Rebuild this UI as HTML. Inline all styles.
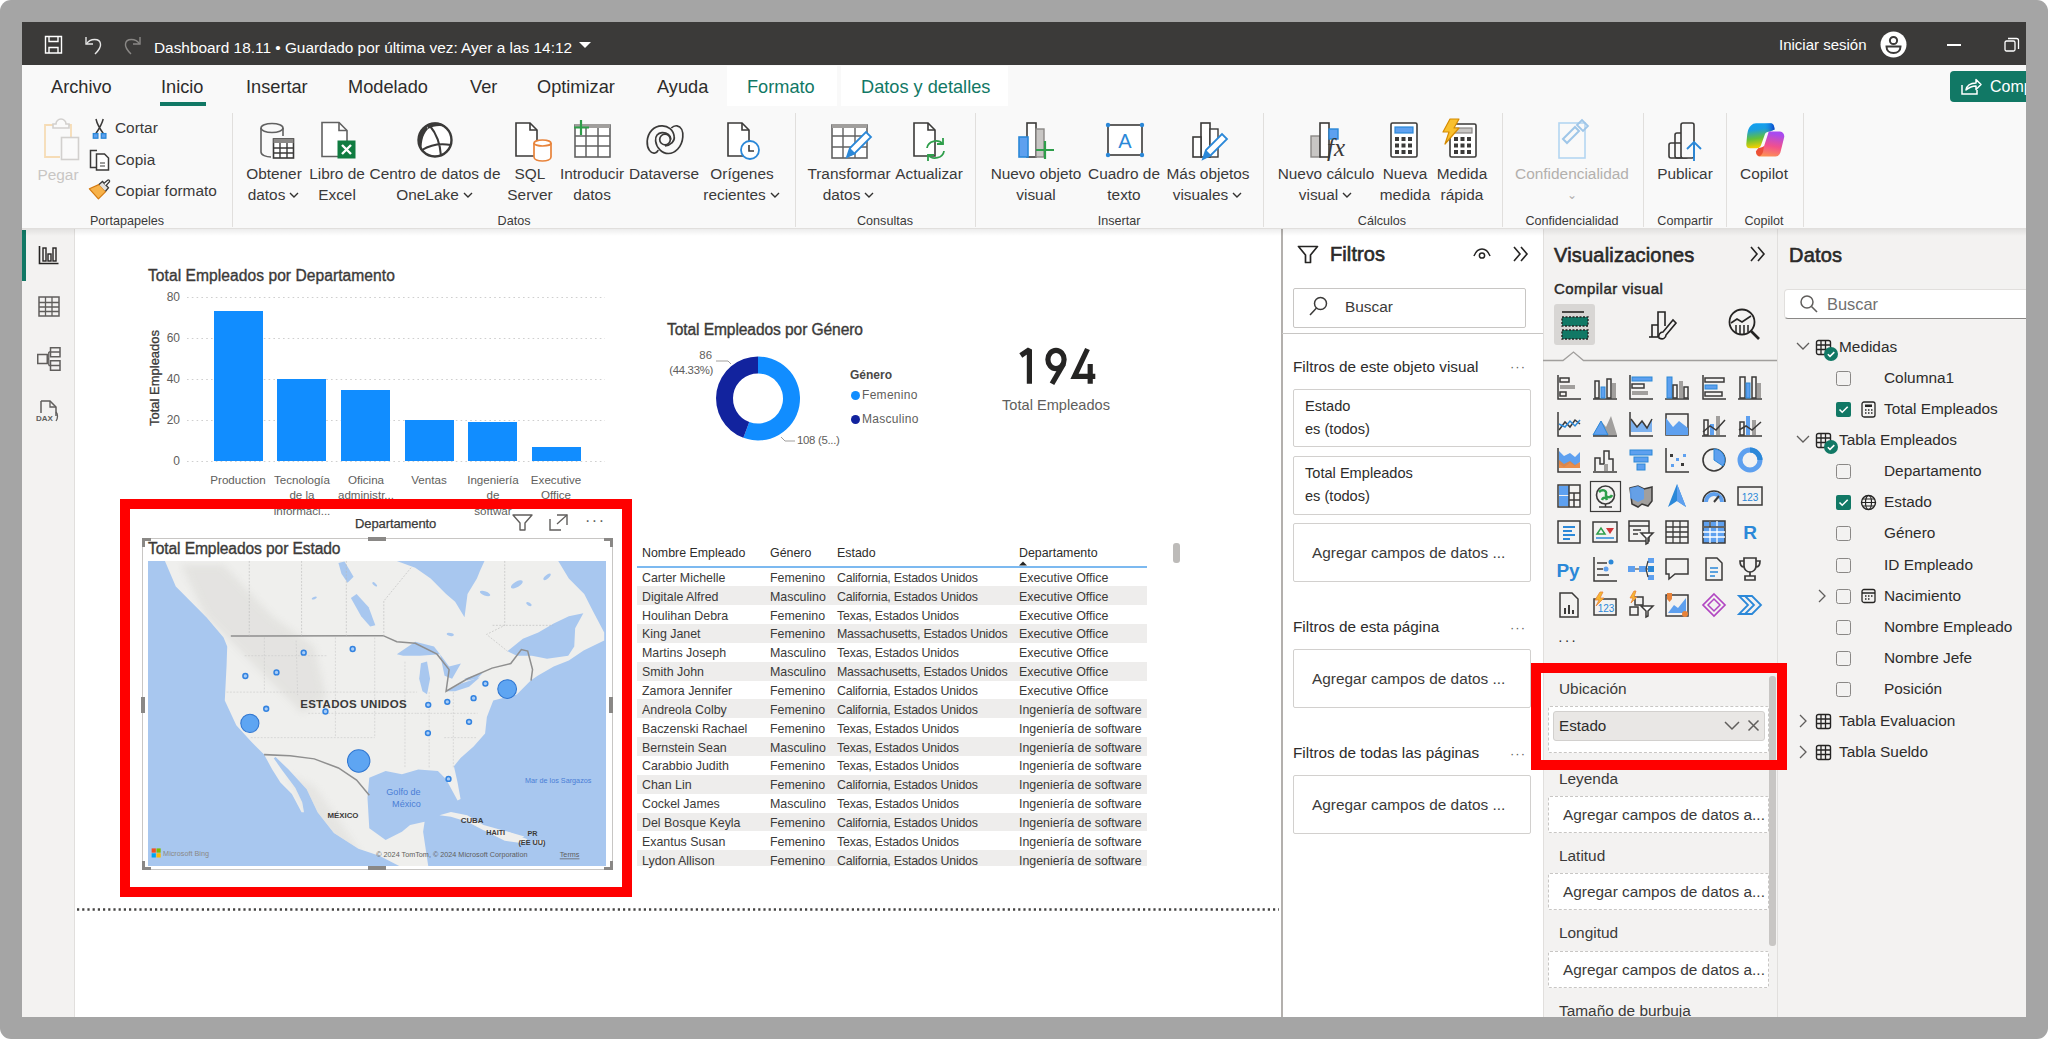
<!DOCTYPE html>
<html><head><meta charset="utf-8">
<style>
*{margin:0;padding:0;box-sizing:border-box}
html,body{width:2048px;height:1039px;overflow:hidden;background:#fff;font-family:"Liberation Sans",sans-serif;color:#252423}
.a{position:absolute}
.t{position:absolute;white-space:nowrap}
svg{overflow:visible}
#frame{position:absolute;left:0;top:0;width:2048px;height:1039px;background:#a5a5a5;border-radius:11px}
#clip{position:absolute;left:22px;top:22px;width:2004px;height:995px;overflow:hidden;background:#fff}
#in{position:absolute;left:-22px;top:-22px;width:2048px;height:1039px}
</style></head><body>
<div id="frame"></div>
<div id="clip"><div id="in">
<div class="a" style="left:0px;top:22px;width:2048px;height:43px;background:#3b3a39;"></div>
<svg class="a" style="left:44px;top:35px;" width="20" height="20" viewBox="0 0 20 20"><path d="M1.5 1.5h16v16.5h-16z M5 1.5v5h9v-5 M5 18v-5.5h9v5.5" fill="none" stroke="#fff" stroke-width="1.4"/></svg>
<svg class="a" style="left:84px;top:35px;" width="20" height="20" viewBox="0 0 20 20"><path d="M2 2v7h7" fill="none" stroke="#e6e6e6" stroke-width="1.4"/><path d="M2.5 9 C6 3, 16 3, 16.5 9 C17 12, 14 16, 11 19" fill="none" stroke="#e6e6e6" stroke-width="1.4"/></svg>
<svg class="a" style="left:122px;top:35px;" width="20" height="20" viewBox="0 0 20 20"><path d="M18 2v7h-7" fill="none" stroke="#8a8886" stroke-width="1.4"/><path d="M17.5 9 C14 3, 4 3, 3.5 9 C3 12, 6 16, 9 19" fill="none" stroke="#8a8886" stroke-width="1.4"/></svg>
<div class="t" style="left:154px;top:36.0px;font-size:15.4px;line-height:24px;color:#ffffff;">Dashboard 18.11 • Guardado por última vez: Ayer a las 14:12</div>
<svg class="a" style="left:579px;top:42px;" width="12" height="7" viewBox="0 0 12 7"><path d="M0 0h12l-6 6z" fill="#fff"/></svg>
<div class="t" style="left:1779px;top:33.0px;font-size:15px;line-height:24px;color:#ffffff;">Iniciar sesión</div>
<svg class="a" style="left:1880px;top:31px;" width="27" height="27" viewBox="0 0 27 27"><circle cx="13.5" cy="13.5" r="13" fill="#fff"/><circle cx="13.5" cy="9.5" r="3.6" fill="none" stroke="#3b3a39" stroke-width="2"/><path d="M6.5 15.5h14c0 4-3 6.5-7 6.5s-7-2.5-7-6.5z" fill="none" stroke="#3b3a39" stroke-width="2"/></svg>
<div class="a" style="left:1947px;top:44px;width:14px;height:1.5px;background:#fff;"></div>
<svg class="a" style="left:2004px;top:37px;" width="16" height="16" viewBox="0 0 16 16"><rect x="1" y="4" width="10" height="10" rx="1.5" fill="none" stroke="#fff" stroke-width="1.3"/><path d="M4 1.5h8.5a2 2 0 0 1 2 2v8.5" fill="none" stroke="#fff" stroke-width="1.3"/></svg>
<div class="a" style="left:0px;top:65px;width:2048px;height:164px;background:#f9f9f9;"></div>
<div class="a" style="left:727px;top:66px;width:110px;height:40px;background:#ffffff;"></div>
<div class="a" style="left:841px;top:66px;width:167px;height:40px;background:#ffffff;"></div>
<div class="t" style="left:51px;top:75.0px;font-size:18.2px;line-height:24px;color:#2d2c2b;">Archivo</div>
<div class="t" style="left:161px;top:75.0px;font-size:18.2px;line-height:24px;color:#2d2c2b;">Inicio</div>
<div class="t" style="left:246px;top:75.0px;font-size:18.2px;line-height:24px;color:#2d2c2b;">Insertar</div>
<div class="t" style="left:348px;top:75.0px;font-size:18.2px;line-height:24px;color:#2d2c2b;">Modelado</div>
<div class="t" style="left:470px;top:75.0px;font-size:18.2px;line-height:24px;color:#2d2c2b;">Ver</div>
<div class="t" style="left:537px;top:75.0px;font-size:18.2px;line-height:24px;color:#2d2c2b;">Optimizar</div>
<div class="t" style="left:657px;top:75.0px;font-size:18.2px;line-height:24px;color:#2d2c2b;">Ayuda</div>
<div class="t" style="left:747px;top:75.0px;font-size:18.2px;line-height:24px;color:#117865;">Formato</div>
<div class="t" style="left:861px;top:75.0px;font-size:18.2px;line-height:24px;color:#117865;">Datos y detalles</div>
<div class="a" style="left:160px;top:102px;width:46px;height:4px;background:#117865;"></div>
<div class="a" style="left:1950px;top:71px;width:90px;height:31px;background:#117865;border-radius:4px"></div>
<svg class="a" style="left:1960px;top:77px;" width="22" height="19" viewBox="0 0 22 19"><path d="M2 8v9h15v-4" fill="none" stroke="#fff" stroke-width="1.5"/><path d="M6 13c1-5 5-7 10-7V2.5l5 5-5 5V9c-4 0-7 1.5-10 4z" fill="none" stroke="#fff" stroke-width="1.5" stroke-linejoin="round"/></svg>
<div class="t" style="left:1990px;top:75.0px;font-size:16px;line-height:24px;color:#ffffff;">Comp</div>
<div class="a" style="left:22px;top:228px;width:2004px;height:1px;background:#e1dfdd;"></div>
<div class="a" style="left:232px;top:113px;width:1px;height:114px;background:#e1dfdd;"></div>
<div class="a" style="left:795px;top:113px;width:1px;height:114px;background:#e1dfdd;"></div>
<div class="a" style="left:975px;top:113px;width:1px;height:114px;background:#e1dfdd;"></div>
<div class="a" style="left:1263px;top:113px;width:1px;height:114px;background:#e1dfdd;"></div>
<div class="a" style="left:1502px;top:113px;width:1px;height:114px;background:#e1dfdd;"></div>
<div class="a" style="left:1643px;top:113px;width:1px;height:114px;background:#e1dfdd;"></div>
<div class="a" style="left:1726px;top:113px;width:1px;height:114px;background:#e1dfdd;"></div>
<div class="a" style="left:1803px;top:113px;width:1px;height:114px;background:#e1dfdd;"></div>
<div class="t" style="left:-173px;width:600px;text-align:center;top:209.0px;font-size:12.6px;line-height:24px;color:#3b3a39;">Portapapeles</div>
<div class="t" style="left:214px;width:600px;text-align:center;top:209.0px;font-size:12.6px;line-height:24px;color:#3b3a39;">Datos</div>
<div class="t" style="left:585px;width:600px;text-align:center;top:209.0px;font-size:12.6px;line-height:24px;color:#3b3a39;">Consultas</div>
<div class="t" style="left:819px;width:600px;text-align:center;top:209.0px;font-size:12.6px;line-height:24px;color:#3b3a39;">Insertar</div>
<div class="t" style="left:1082px;width:600px;text-align:center;top:209.0px;font-size:12.6px;line-height:24px;color:#3b3a39;">Cálculos</div>
<div class="t" style="left:1272px;width:600px;text-align:center;top:209.0px;font-size:12.6px;line-height:24px;color:#3b3a39;">Confidencialidad</div>
<div class="t" style="left:1385px;width:600px;text-align:center;top:209.0px;font-size:12.6px;line-height:24px;color:#3b3a39;">Compartir</div>
<div class="t" style="left:1464px;width:600px;text-align:center;top:209.0px;font-size:12.6px;line-height:24px;color:#3b3a39;">Copilot</div>
<svg class="a" style="left:40px;top:119px;" width="42" height="44" viewBox="0 0 42 44"><path d="M13 6H5v32h15" fill="none" stroke="#f6dcb6" stroke-width="1.8"/><path d="M27 6h4v18" fill="none" stroke="#f6dcb6" stroke-width="1.8"/><path d="M13 9V5h3a5 5 0 0 1 10 0h3v4z" fill="#fafafa" stroke="#d2d0ce" stroke-width="1.6"/><rect x="21.5" y="18.5" width="17" height="22" fill="#fafafa" stroke="#d2d0ce" stroke-width="1.6"/></svg>
<div class="t" style="left:-242px;width:600px;text-align:center;top:163.0px;font-size:15.4px;line-height:24px;color:#c8c6c4;">Pegar</div>
<svg class="a" style="left:91px;top:119px;" width="18" height="20" viewBox="0 0 18 20"><path d="M5 0C6 5 9 10 12.6 15M12.2 0C11 5 8 10 4.6 15" stroke="#3b3a39" stroke-width="1.5" fill="none"/><rect x="2.3" y="14.6" width="4.6" height="4.6" fill="#5ea0ef" stroke="#2b88d8" stroke-width="1.3"/><rect x="10.3" y="14.6" width="4.6" height="4.6" fill="#5ea0ef" stroke="#2b88d8" stroke-width="1.3"/></svg>
<div class="t" style="left:115px;top:116.0px;font-size:15.4px;line-height:24px;color:#3b3a39;">Cortar</div>
<svg class="a" style="left:89px;top:149px;" width="22" height="22" viewBox="0 0 22 22"><path d="M8 1.5H1.5v17H7" fill="none" stroke="#3b3a39" stroke-width="1.5"/><path d="M7.5 5h8l4 4v12h-12z" fill="#fff" stroke="#3b3a39" stroke-width="1.5"/><path d="M11 14h5M11 17h5" stroke="#3b3a39" stroke-width="1.2"/></svg>
<div class="t" style="left:115px;top:148.0px;font-size:15.4px;line-height:24px;color:#3b3a39;">Copia</div>
<svg class="a" style="left:88px;top:179px;" width="23" height="22" viewBox="0 0 23 22"><path d="M1.4 9.8L11.3 5.4L17.7 12.6L10.4 19.9Z" fill="#f7b24a" stroke="#d47a10" stroke-width="1.2" stroke-linejoin="round"/><path d="M11 5.6L14.5 2.5L20.5 8.8L17.5 12.2" fill="#e1dfdd" stroke="#3b3a39" stroke-width="1.3"/><path d="M15.8 4.6L19.6 1.2C20.6 0.4 22.2 1.8 21.4 2.8L18 6.6" fill="#fff" stroke="#3b3a39" stroke-width="1.3"/></svg>
<div class="t" style="left:115px;top:179.0px;font-size:15.4px;line-height:24px;color:#3b3a39;">Copiar formato</div>
<svg class="a" style="left:258.0px;top:121px;" width="40" height="40" viewBox="0 0 40 40"><path d="M3 7v24c0 3 5 5 10 5" fill="none" stroke="#616161" stroke-width="1.6"/><path d="M25 7v8" fill="none" stroke="#616161" stroke-width="1.6"/><ellipse cx="14" cy="7" rx="11" ry="4.5" fill="none" stroke="#616161" stroke-width="1.6"/><rect x="15.5" y="18" width="20" height="19" fill="#fff" stroke="#3b3a39" stroke-width="1.6"/><rect x="15.5" y="18" width="20" height="4" fill="#8a8886"/><path d="M15.5 27h20M15.5 32h20M22 22v15M29 22v15" stroke="#3b3a39" stroke-width="1.4"/></svg>
<div class="t" style="left:-26px;width:600px;text-align:center;top:162.0px;font-size:15.4px;line-height:24px;color:#3b3a39;">Obtener</div>
<div class="t" style="left:-26px;width:600px;text-align:center;top:183.0px;font-size:15.4px;line-height:24px;color:#3b3a39;">datos<svg width="12" height="8" style="margin-left:3px;vertical-align:middle;position:relative;top:-1px" viewBox="0 0 12 8"><path d="M2 2l4 4 4-4" fill="none" stroke="#323130" stroke-width="1.4"/></svg></div>
<svg class="a" style="left:318.0px;top:121px;" width="40" height="40" viewBox="0 0 40 40"><path d="M4 1.5h17l8 8v26H4z" fill="#fff" stroke="#616161" stroke-width="1.6"/><path d="M21 1.5v8h8" fill="none" stroke="#616161" stroke-width="1.6"/><rect x="19.5" y="19.5" width="18" height="18" fill="#107c41"/><path d="M24 24l9 9M33 24l-9 9" stroke="#fff" stroke-width="2.4"/></svg>
<div class="t" style="left:37px;width:600px;text-align:center;top:162.0px;font-size:15.4px;line-height:24px;color:#3b3a39;">Libro de</div>
<div class="t" style="left:37px;width:600px;text-align:center;top:183.0px;font-size:15.4px;line-height:24px;color:#3b3a39;">Excel</div>
<svg class="a" style="left:415.0px;top:120px;" width="40" height="40" viewBox="0 0 40 40"><circle cx="20" cy="20" r="16.5" fill="#fff" stroke="#3b3a39" stroke-width="2.4"/><path d="M11 6C3 11 1 24 7 32C6 25 7 15 13 9Z" fill="#3b3a39"/><path d="M12 5C18 1 26 2 31 7C25 5 18 6 13 9Z" fill="#3b3a39"/><path d="M15 6C21 13 25 22 26 36M7 30C15 25 25 23 36 25" fill="none" stroke="#3b3a39" stroke-width="2"/></svg>
<div class="t" style="left:135px;width:600px;text-align:center;top:162.0px;font-size:15.4px;line-height:24px;color:#3b3a39;">Centro de datos de</div>
<div class="t" style="left:135px;width:600px;text-align:center;top:183.0px;font-size:15.4px;line-height:24px;color:#3b3a39;">OneLake<svg width="12" height="8" style="margin-left:3px;vertical-align:middle;position:relative;top:-1px" viewBox="0 0 12 8"><path d="M2 2l4 4 4-4" fill="none" stroke="#323130" stroke-width="1.4"/></svg></div>
<svg class="a" style="left:511.0px;top:121px;" width="40" height="40" viewBox="0 0 40 40"><path d="M5 2h14l7 7v26H5z" fill="#fff" stroke="#3b3a39" stroke-width="1.6"/><path d="M19 2v7h7" fill="none" stroke="#3b3a39" stroke-width="1.6"/><path d="M23 22v14c0 2.5 4 4 8.5 4s8.5-1.5 8.5-4V22" fill="#fff" stroke="#e8833a" stroke-width="1.7"/><ellipse cx="31.5" cy="22" rx="8.5" ry="3" fill="#fff" stroke="#e8833a" stroke-width="1.7"/></svg>
<div class="t" style="left:230px;width:600px;text-align:center;top:162.0px;font-size:15.4px;line-height:24px;color:#3b3a39;">SQL</div>
<div class="t" style="left:230px;width:600px;text-align:center;top:183.0px;font-size:15.4px;line-height:24px;color:#3b3a39;">Server</div>
<svg class="a" style="left:572.0px;top:120px;" width="40" height="40" viewBox="0 0 40 40"><rect x="3" y="5" width="35" height="32" fill="#fff" stroke="#616161" stroke-width="1.6"/><rect x="3" y="4" width="35" height="4" fill="#a19f9d"/><path d="M3 16h35M3 26h35M14 8v29M26 8v29" stroke="#616161" stroke-width="1.5"/><path d="M9 0v15M2 7.5h15" stroke="#2e9e4a" stroke-width="2.2"/></svg>
<div class="t" style="left:292px;width:600px;text-align:center;top:162.0px;font-size:15.4px;line-height:24px;color:#3b3a39;">Introducir</div>
<div class="t" style="left:292px;width:600px;text-align:center;top:183.0px;font-size:15.4px;line-height:24px;color:#3b3a39;">datos</div>
<svg class="a" style="left:644px;top:119px;" width="40" height="40" viewBox="0 0 40 40"><path d="M21 26.8C27 26 31 22 30.2 17.7C29.5 11 24 6.5 17.7 6.8C10 7 4 13 3.2 22C2.8 30 7 35 11 34C12.5 33.6 13.6 32.5 14.3 31.1" fill="none" stroke="#3b3a39" stroke-width="1.7"/><path d="M27.3 9C29 7.3 31 6.5 33 6.8C37 7.5 39.3 12 38.8 18C38 28 31 34.5 24.4 34.5C18 34.5 12.5 29 11.6 22C11 17 14 14 18 13.6C23 13.3 27 16.5 27 20.5" fill="none" stroke="#3b3a39" stroke-width="1.7"/><circle cx="21" cy="20.5" r="5.3" fill="none" stroke="#3b3a39" stroke-width="1.7"/></svg>
<div class="t" style="left:364px;width:600px;text-align:center;top:162.0px;font-size:15.4px;line-height:24px;color:#3b3a39;">Dataverse</div>
<svg class="a" style="left:724.0px;top:121px;" width="40" height="40" viewBox="0 0 40 40"><path d="M4 2h14l7 7v26H4z" fill="#fff" stroke="#3b3a39" stroke-width="1.6"/><path d="M18 2v7h7" fill="none" stroke="#3b3a39" stroke-width="1.6"/><circle cx="26" cy="29" r="9" fill="#fff" stroke="#2b88d8" stroke-width="1.8"/><path d="M25 24v6h5" fill="none" stroke="#3b3a39" stroke-width="1.6"/></svg>
<div class="t" style="left:442px;width:600px;text-align:center;top:162.0px;font-size:15.4px;line-height:24px;color:#3b3a39;">Orígenes</div>
<div class="t" style="left:442px;width:600px;text-align:center;top:183.0px;font-size:15.4px;line-height:24px;color:#3b3a39;">recientes<svg width="12" height="8" style="margin-left:3px;vertical-align:middle;position:relative;top:-1px" viewBox="0 0 12 8"><path d="M2 2l4 4 4-4" fill="none" stroke="#323130" stroke-width="1.4"/></svg></div>
<svg class="a" style="left:829.0px;top:121px;" width="40" height="40" viewBox="0 0 40 40"><rect x="3" y="4" width="35" height="33" fill="#fff" stroke="#616161" stroke-width="1.6"/><rect x="3" y="3" width="35" height="4" fill="#a19f9d"/><path d="M3 15h35M3 26h35M14 7v30M26 7v30" stroke="#616161" stroke-width="1.4"/><path d="M18 36l3-9 16-16 5 5-16 16z" fill="#fff" stroke="#2b88d8" stroke-width="1.8"/><path d="M18 36l3-9 6 6z" fill="#2b88d8"/></svg>
<div class="t" style="left:549px;width:600px;text-align:center;top:162.0px;font-size:15.4px;line-height:24px;color:#3b3a39;">Transformar</div>
<div class="t" style="left:549px;width:600px;text-align:center;top:183.0px;font-size:15.4px;line-height:24px;color:#3b3a39;">datos<svg width="12" height="8" style="margin-left:3px;vertical-align:middle;position:relative;top:-1px" viewBox="0 0 12 8"><path d="M2 2l4 4 4-4" fill="none" stroke="#323130" stroke-width="1.4"/></svg></div>
<svg class="a" style="left:910.0px;top:121px;" width="40" height="40" viewBox="0 0 40 40"><path d="M4 2h14l7 7v26H4z" fill="#fff" stroke="#3b3a39" stroke-width="1.6"/><path d="M18 2v7h7" fill="none" stroke="#3b3a39" stroke-width="1.6"/><path d="M17 27a9 8 0 0 1 16-4M34 30a9 8 0 0 1-16 4" fill="none" stroke="#2e9e4a" stroke-width="1.8"/><path d="M33 17v6h-6M18 40v-6h6" fill="none" stroke="#2e9e4a" stroke-width="1.8"/></svg>
<div class="t" style="left:629px;width:600px;text-align:center;top:162.0px;font-size:15.4px;line-height:24px;color:#3b3a39;">Actualizar</div>
<svg class="a" style="left:1017.0px;top:120px;" width="40" height="40" viewBox="0 0 40 40"><rect x="10" y="3" width="9" height="34" fill="#fff" stroke="#3b3a39" stroke-width="1.6"/><rect x="2" y="17" width="9" height="20" fill="#5ea0ef" stroke="#2b88d8" stroke-width="1.6"/><rect x="19" y="9" width="8" height="28" fill="#c8c6c4" stroke="#8a8886" stroke-width="1.4"/><path d="M28 21v18M19 30h18" stroke="#2e9e4a" stroke-width="2.2"/></svg>
<div class="t" style="left:736px;width:600px;text-align:center;top:162.0px;font-size:15.4px;line-height:24px;color:#3b3a39;">Nuevo objeto</div>
<div class="t" style="left:736px;width:600px;text-align:center;top:183.0px;font-size:15.4px;line-height:24px;color:#3b3a39;">visual</div>
<svg class="a" style="left:1105.0px;top:121px;" width="40" height="40" viewBox="0 0 40 40"><rect x="3" y="4" width="34" height="30" fill="#fff" stroke="#3b3a39" stroke-width="1.6"/><circle cx="3" cy="4" r="2.2" fill="#2b88d8"/><circle cx="37" cy="4" r="2.2" fill="#2b88d8"/><circle cx="3" cy="34" r="2.2" fill="#2b88d8"/><circle cx="37" cy="34" r="2.2" fill="#2b88d8"/><text x="20" y="27" font-size="20" text-anchor="middle" fill="#2b88d8" font-family="Liberation Sans">A</text></svg>
<div class="t" style="left:824px;width:600px;text-align:center;top:162.0px;font-size:15.4px;line-height:24px;color:#3b3a39;">Cuadro de</div>
<div class="t" style="left:824px;width:600px;text-align:center;top:183.0px;font-size:15.4px;line-height:24px;color:#3b3a39;">texto</div>
<svg class="a" style="left:1189.0px;top:120px;" width="40" height="40" viewBox="0 0 40 40"><rect x="12" y="3" width="9" height="34" fill="#fff" stroke="#3b3a39" stroke-width="1.6"/><rect x="4" y="17" width="8" height="20" fill="#fff" stroke="#3b3a39" stroke-width="1.6"/><rect x="21" y="9" width="8" height="28" fill="#fff" stroke="#3b3a39" stroke-width="1.4"/><path d="M14 39l3-9 16-16 5 5-16 16z" fill="#fff" stroke="#2b88d8" stroke-width="1.8"/><path d="M14 39l3-9 6 6z" fill="#2b88d8"/></svg>
<div class="t" style="left:908px;width:600px;text-align:center;top:162.0px;font-size:15.4px;line-height:24px;color:#3b3a39;">Más objetos</div>
<div class="t" style="left:908px;width:600px;text-align:center;top:183.0px;font-size:15.4px;line-height:24px;color:#3b3a39;">visuales<svg width="12" height="8" style="margin-left:3px;vertical-align:middle;position:relative;top:-1px" viewBox="0 0 12 8"><path d="M2 2l4 4 4-4" fill="none" stroke="#323130" stroke-width="1.4"/></svg></div>
<svg class="a" style="left:1307.0px;top:120px;" width="40" height="40" viewBox="0 0 40 40"><rect x="4" y="16" width="9" height="21" fill="#c8c6c4" stroke="#8a8886" stroke-width="1.4"/><rect x="13" y="3" width="9" height="34" fill="#fff" stroke="#3b3a39" stroke-width="1.6"/><rect x="22" y="9" width="9" height="10" fill="#5ea0ef" stroke="#2b88d8" stroke-width="1.4"/><text x="29" y="36" font-size="25" font-style="italic" text-anchor="middle" fill="#3b3a39" font-family="Liberation Serif">fx</text></svg>
<div class="t" style="left:1026px;width:600px;text-align:center;top:162.0px;font-size:15.4px;line-height:24px;color:#3b3a39;">Nuevo cálculo</div>
<div class="t" style="left:1026px;width:600px;text-align:center;top:183.0px;font-size:15.4px;line-height:24px;color:#3b3a39;">visual<svg width="12" height="8" style="margin-left:3px;vertical-align:middle;position:relative;top:-1px" viewBox="0 0 12 8"><path d="M2 2l4 4 4-4" fill="none" stroke="#323130" stroke-width="1.4"/></svg></div>
<svg class="a" style="left:1385.0px;top:120px;" width="40" height="40" viewBox="0 0 40 40"><rect x="6" y="3" width="26" height="34" rx="1.5" fill="#fff" stroke="#3b3a39" stroke-width="1.6"/><rect x="10" y="7" width="18" height="6" fill="#5ea0ef" stroke="#2b88d8" stroke-width="1.2"/><rect x="10.0" y="17.0" width="4" height="4" fill="#3b3a39"/><rect x="16.5" y="17.0" width="4" height="4" fill="#3b3a39"/><rect x="23.0" y="17.0" width="4" height="4" fill="#3b3a39"/><rect x="10.0" y="23.5" width="4" height="4" fill="#3b3a39"/><rect x="16.5" y="23.5" width="4" height="4" fill="#3b3a39"/><rect x="23.0" y="23.5" width="4" height="4" fill="#3b3a39"/><rect x="10.0" y="30.0" width="4" height="4" fill="#3b3a39"/><rect x="16.5" y="30.0" width="4" height="4" fill="#3b3a39"/><rect x="23.0" y="30.0" width="4" height="4" fill="#3b3a39"/></svg>
<div class="t" style="left:1105px;width:600px;text-align:center;top:162.0px;font-size:15.4px;line-height:24px;color:#3b3a39;">Nueva</div>
<div class="t" style="left:1105px;width:600px;text-align:center;top:183.0px;font-size:15.4px;line-height:24px;color:#3b3a39;">medida</div>
<svg class="a" style="left:1440.0px;top:119px;" width="40" height="40" viewBox="0 0 40 40"><rect x="10" y="5" width="26" height="33" rx="1.5" fill="#fff" stroke="#3b3a39" stroke-width="1.6"/><rect x="14" y="9" width="18" height="5" fill="#c8c6c4" stroke="#8a8886" stroke-width="1.2"/><rect x="14.0" y="18.0" width="4" height="4" fill="#3b3a39"/><rect x="20.5" y="18.0" width="4" height="4" fill="#3b3a39"/><rect x="27.0" y="18.0" width="4" height="4" fill="#3b3a39"/><rect x="14.0" y="24.5" width="4" height="4" fill="#3b3a39"/><rect x="20.5" y="24.5" width="4" height="4" fill="#3b3a39"/><rect x="27.0" y="24.5" width="4" height="4" fill="#3b3a39"/><rect x="14.0" y="31.0" width="4" height="4" fill="#3b3a39"/><rect x="20.5" y="31.0" width="4" height="4" fill="#3b3a39"/><rect x="27.0" y="31.0" width="4" height="4" fill="#3b3a39"/><path d="M10 0H19L14 9H19L5 25L9 13H3Z" fill="#f9c02e" stroke="#d68b00" stroke-width="1.2" stroke-linejoin="round"/></svg>
<div class="t" style="left:1162px;width:600px;text-align:center;top:162.0px;font-size:15.4px;line-height:24px;color:#3b3a39;">Medida</div>
<div class="t" style="left:1162px;width:600px;text-align:center;top:183.0px;font-size:15.4px;line-height:24px;color:#3b3a39;">rápida</div>
<svg class="a" style="left:1555.0px;top:119px;" width="40" height="40" viewBox="0 0 40 40"><rect x="4" y="4" width="26" height="35" fill="none" stroke="#b4d6f2" stroke-width="1.6"/><path d="M8 20l12-12 4 4-12 12z" fill="none" stroke="#9fc6e8" stroke-width="2"/><path d="M22 6l5-5 6 6-5 5z" fill="none" stroke="#9fc6e8" stroke-width="1.8"/></svg>
<div class="t" style="left:1272px;width:600px;text-align:center;top:162.0px;font-size:15.4px;line-height:24px;color:#b3b0ad;">Confidencialidad</div>
<div class="t" style="left:1272px;width:600px;text-align:center;top:183.0px;font-size:12px;line-height:24px;color:#b3b0ad;">&#8964;</div>
<svg class="a" style="left:1667.0px;top:121px;" width="40" height="40" viewBox="0 0 40 40"><rect x="2" y="22" width="13" height="15" rx="2" fill="none" stroke="#3b3a39" stroke-width="1.6"/><rect x="8" y="12" width="13" height="25" rx="2" fill="none" stroke="#3b3a39" stroke-width="1.6"/><rect x="14" y="2" width="13" height="35" rx="2" fill="#f9f9f9" stroke="#3b3a39" stroke-width="1.6"/><path d="M27 40V21M20 28l7-7 7 7" fill="none" stroke="#2b88d8" stroke-width="1.9"/></svg>
<div class="t" style="left:1385px;width:600px;text-align:center;top:162.0px;font-size:15.4px;line-height:24px;color:#3b3a39;">Publicar</div>
<svg class="a" style="left:1744px;top:121px;" width="42" height="38" viewBox="0 0 42 38"><defs><linearGradient id="cpa" x1="0" y1="0" x2="0.15" y2="1"><stop offset="0" stop-color="#10a0f5"/><stop offset=".3" stop-color="#1b9ee0"/><stop offset=".65" stop-color="#63c13a"/><stop offset="1" stop-color="#f2cf00"/></linearGradient><linearGradient id="cpb" x1="0.2" y1="0" x2="0" y2="1"><stop offset="0" stop-color="#a84af0"/><stop offset=".5" stop-color="#f2508c"/><stop offset="1" stop-color="#ff9b4a"/></linearGradient><linearGradient id="cpc" x1="0" y1="0" x2="1" y2="0"><stop offset="0" stop-color="#1b8ff0" stop-opacity="0"/><stop offset="1" stop-color="#0b3fc8"/></linearGradient></defs><path d="M7 4.6Q9 2.2 12 2.2H27Q30 2.2 30.6 8.4L26 10.4Q22 10.4 21 13L16.7 25Q15.5 27.2 13 27.2H6Q2 27.2 2.3 23L3.2 13.5Q4 7 7 4.6Z" fill="url(#cpa)"/><path d="M20 2.2H27Q30 2.2 30.6 8.4L26 10.4Q23 10.4 21.5 11.5L20 2.2Z" fill="url(#cpc)"/><path d="M25 10.4H36Q40.3 11 40.3 15.7L36.4 31.5Q35 35.4 31.6 35.4H16Q12.5 35.4 11.9 30.6L14.3 27.2Q18 27 20 25.3L24 13Q24.5 10.4 25 10.4Z" fill="url(#cpb)"/><path d="M11.9 30.6L14.3 27.2Q18 27 20 25.3L19 31Q17 35.4 15 35.4Q12.5 35 11.9 30.6Z" fill="#e8452c" opacity=".8"/></svg>
<div class="t" style="left:1464px;width:600px;text-align:center;top:162.0px;font-size:15.4px;line-height:24px;color:#3b3a39;">Copilot</div>
<div class="a" style="left:22px;top:229px;width:53px;height:788px;background:#f3f2f1;border-right:1px solid #e1dfdd"></div>
<div class="a" style="left:22px;top:230px;width:4px;height:51px;background:#117865;"></div>
<svg class="a" style="left:38px;top:245px;" width="22" height="20" viewBox="0 0 22 20"><path d="M1.5 1v17.5h19" fill="none" stroke="#252423" stroke-width="1.6"/><rect x="5" y="3" width="3" height="13" fill="none" stroke="#252423" stroke-width="1.4"/><rect x="10" y="9" width="3" height="7" fill="none" stroke="#252423" stroke-width="1.4"/><rect x="15" y="3" width="3" height="13" fill="none" stroke="#252423" stroke-width="1.4"/></svg>
<svg class="a" style="left:38px;top:296px;" width="22" height="21" viewBox="0 0 22 21"><rect x="1" y="1" width="20" height="19" fill="none" stroke="#605e5c" stroke-width="1.5"/><path d="M1 6.5h20M1 11h20M1 15.5h20M7.5 1v19M14 1v19" stroke="#605e5c" stroke-width="1.3"/></svg>
<svg class="a" style="left:37px;top:347px;" width="24" height="24" viewBox="0 0 24 24"><rect x="0.75" y="7.5" width="9.5" height="9" fill="none" stroke="#605e5c" stroke-width="1.5"/><rect x="13.5" y="0.75" width="9.5" height="9" fill="none" stroke="#605e5c" stroke-width="1.5"/><rect x="13.5" y="13.75" width="9.5" height="9.5" fill="none" stroke="#605e5c" stroke-width="1.5"/><path d="M10 12h1.75M11.75 5v13.5M11.75 5h1.75M11.75 18.5h1.75M13.5 5h9.5M13.5 18.5h9.5" fill="none" stroke="#605e5c" stroke-width="1.3"/></svg>
<svg class="a" style="left:35px;top:400px;" width="26" height="24" viewBox="0 0 26 24"><path d="M6 1h9l6 6v9" fill="none" stroke="#605e5c" stroke-width="1.5"/><path d="M6 1v12" stroke="#605e5c" stroke-width="1.5"/><path d="M15 1v6h6" fill="none" stroke="#605e5c" stroke-width="1.3"/><path d="M21 12c2 2 2 6 0 9" fill="none" stroke="#605e5c" stroke-width="1.3"/><text x="1" y="21" font-size="8" font-family="Liberation Sans" font-weight="700" fill="#605e5c">DAX</text></svg>
<div class="a" style="left:1281px;top:229px;width:262px;height:788px;background:#ffffff;border-left:2px solid #b3b0ad"></div>
<svg class="a" style="left:1297px;top:245px;" width="22" height="19" viewBox="0 0 22 19"><path d="M1.5 1.5h19l-7 8.5v7.5h-5v-7.5z" fill="none" stroke="#252423" stroke-width="1.7" stroke-linejoin="round"/></svg>
<div class="t" style="left:1330px;top:242.0px;font-size:20px;line-height:24px;color:#2d2c2b;letter-spacing:0.1px;-webkit-text-stroke:0.6px #252423">Filtros</div>
<svg class="a" style="left:1472px;top:247px;" width="20" height="14" viewBox="0 0 20 14"><path d="M2 9c2-5 5-7 8-7s6 2 8 7" fill="none" stroke="#252423" stroke-width="1.5"/><circle cx="10" cy="8.5" r="2.6" fill="none" stroke="#252423" stroke-width="1.5"/></svg>
<svg class="a" style="left:1512px;top:246px;" width="18" height="16" viewBox="0 0 18 16"><path d="M2 1l6 7-6 7M9 1l6 7-6 7" fill="none" stroke="#252423" stroke-width="1.6"/></svg>
<div class="a" style="left:1293px;top:288px;width:233px;height:40px;background:#fff;border:1px solid #c8c6c4;border-radius:2px"></div>
<svg class="a" style="left:1308px;top:296px;" width="20" height="22" viewBox="0 0 20 22"><circle cx="12.5" cy="7.5" r="6" fill="none" stroke="#3b3a39" stroke-width="1.5"/><path d="M8.5 12L2 19" stroke="#3b3a39" stroke-width="1.5"/></svg>
<div class="t" style="left:1345px;top:295.0px;font-size:15.4px;line-height:24px;color:#3b3a39;">Buscar</div>
<div class="a" style="left:1282px;top:333px;width:261px;height:1px;background:#c8c6c4;"></div>
<div class="t" style="left:1293px;top:355.0px;font-size:15.3px;line-height:24px;color:#2d2c2b;">Filtros de este objeto visual</div>
<div class="t" style="left:1510px;top:355.0px;font-size:13px;line-height:24px;color:#605e5c;letter-spacing:1px;">···</div>
<div class="a" style="left:1293px;top:389px;width:238px;height:58px;background:#fff;border:1px solid #d2d0ce;border-radius:2px"></div>
<div class="t" style="left:1305px;top:394.0px;font-size:14.6px;line-height:24px;color:#2d2c2b;">Estado</div>
<div class="t" style="left:1305px;top:417.0px;font-size:14.6px;line-height:24px;color:#2d2c2b;">es (todos)</div>
<div class="a" style="left:1293px;top:456px;width:238px;height:59px;background:#fff;border:1px solid #d2d0ce;border-radius:2px"></div>
<div class="t" style="left:1305px;top:461.0px;font-size:14.6px;line-height:24px;color:#2d2c2b;">Total Empleados</div>
<div class="t" style="left:1305px;top:484.0px;font-size:14.6px;line-height:24px;color:#2d2c2b;">es (todos)</div>
<div class="a" style="left:1293px;top:523px;width:238px;height:59px;background:#fff;border:1px solid #d2d0ce;border-radius:2px"></div>
<div class="t" style="left:1312px;top:541.0px;font-size:15.4px;line-height:24px;color:#3b3a39;">Agregar campos de datos ...</div>
<div class="t" style="left:1293px;top:615.0px;font-size:15.3px;line-height:24px;color:#2d2c2b;">Filtros de esta página</div>
<div class="t" style="left:1510px;top:616.0px;font-size:13px;line-height:24px;color:#605e5c;letter-spacing:1px;">···</div>
<div class="a" style="left:1293px;top:649px;width:238px;height:59px;background:#fff;border:1px solid #d2d0ce;border-radius:2px"></div>
<div class="t" style="left:1312px;top:667.0px;font-size:15.4px;line-height:24px;color:#3b3a39;">Agregar campos de datos ...</div>
<div class="t" style="left:1293px;top:741.0px;font-size:15.3px;line-height:24px;color:#2d2c2b;">Filtros de todas las páginas</div>
<div class="t" style="left:1510px;top:742.0px;font-size:13px;line-height:24px;color:#605e5c;letter-spacing:1px;">···</div>
<div class="a" style="left:1293px;top:775px;width:238px;height:59px;background:#fff;border:1px solid #d2d0ce;border-radius:2px"></div>
<div class="t" style="left:1312px;top:793.0px;font-size:15.4px;line-height:24px;color:#3b3a39;">Agregar campos de datos ...</div>
<div class="a" style="left:1543px;top:229px;width:234px;height:788px;background:#f3f2f1;border-left:1px solid #e1dfdd"></div>
<div class="t" style="left:1554px;top:243.0px;font-size:20px;line-height:24px;color:#2d2c2b;letter-spacing:0.2px;-webkit-text-stroke:0.6px #252423">Visualizaciones</div>
<svg class="a" style="left:1749px;top:246px;" width="18" height="16" viewBox="0 0 18 16"><path d="M2 1l6 7-6 7M9 1l6 7-6 7" fill="none" stroke="#252423" stroke-width="1.6"/></svg>
<div class="t" style="left:1554px;top:277.0px;font-size:15px;line-height:24px;color:#2d2c2b;letter-spacing:0.45px;-webkit-text-stroke:0.45px #252423">Compilar visual</div>
<div class="a" style="left:1554px;top:304px;width:41px;height:41px;background:#d8d6d4;border-radius:3px"></div>
<svg class="a" style="left:1557px;top:307px;" width="36" height="36" viewBox="0 0 36 36"><path d="M5 5h22" stroke="#252423" stroke-width="1.6"/><rect x="5" y="10" width="26" height="9" fill="#117865" stroke="#252423" stroke-width="1.4" stroke-dasharray="2 1.5"/><rect x="5" y="23" width="26" height="9" fill="#117865" stroke="#252423" stroke-width="1.4" stroke-dasharray="2 1.5"/></svg>
<svg class="a" style="left:1645px;top:308px;" width="34" height="34" viewBox="0 0 34 34"><path d="M7 29V17h6v12M13 29V4h7v14" fill="none" stroke="#252423" stroke-width="1.6"/><path d="M4 29h9" stroke="#252423" stroke-width="1.6"/><path d="M14 30c-1-3 1-6 4-6l10-12 3 3-10 12c0 3-3 5-7 3z" fill="none" stroke="#252423" stroke-width="1.6"/></svg>
<svg class="a" style="left:1728px;top:308px;" width="36" height="34" viewBox="0 0 36 34"><circle cx="14" cy="14" r="12.5" fill="none" stroke="#252423" stroke-width="1.8"/><path d="M23 23l8 8" stroke="#252423" stroke-width="2.6"/><path d="M3 15l6-4 5 3 9-6" fill="none" stroke="#252423" stroke-width="1.6"/><path d="M8 17v8M12 17v9M16 17v9M20 17v7" stroke="#252423" stroke-width="1.5"/></svg>
<svg class="a" style="left:1543px;top:348px;" width="234" height="14" viewBox="0 0 234 14"><path d="M0 12.5H20L30.5 4l10 8.5H234" fill="none" stroke="#a19f9d" stroke-width="1.3"/></svg>
<svg class="a" style="left:1555px;top:373px;" width="28" height="28" viewBox="0 0 28 28"><path d="M3 2v24h23" fill="none" stroke="#3b3a39" stroke-width="1.5"/><rect x="5" y="5" width="9" height="4" fill="none" stroke="#3b3a39" stroke-width="1.5"/><rect x="5" y="12" width="15" height="4" fill="#a19f9d"/><rect x="5" y="19" width="6" height="4" fill="none" stroke="#3b3a39" stroke-width="1.5"/></svg>
<svg class="a" style="left:1591px;top:373px;" width="28" height="28" viewBox="0 0 28 28"><path d="M2 26h24" stroke="#3b3a39" stroke-width="1.5"/><rect x="4" y="8" width="4" height="17" fill="none" stroke="#3b3a39" stroke-width="1.5"/><rect x="10" y="14" width="4" height="11" fill="#5ea0ef" stroke="#2b88d8"/><rect x="16" y="6" width="4" height="19" fill="none" stroke="#3b3a39" stroke-width="1.5"/><rect x="21" y="10" width="4" height="15" fill="#a19f9d"/></svg>
<svg class="a" style="left:1627px;top:373px;" width="28" height="28" viewBox="0 0 28 28"><path d="M3 2v24h23" fill="none" stroke="#3b3a39" stroke-width="1.5"/><rect x="5" y="4" width="20" height="4" fill="#5ea0ef" stroke="#2b88d8"/><rect x="5" y="11" width="12" height="4" fill="none" stroke="#3b3a39" stroke-width="1.5"/><rect x="5" y="18" width="16" height="4" fill="#a19f9d"/></svg>
<svg class="a" style="left:1663px;top:373px;" width="28" height="28" viewBox="0 0 28 28"><path d="M2 26h24" stroke="#3b3a39" stroke-width="1.5"/><rect x="4" y="4" width="5" height="21" fill="#5ea0ef" stroke="#2b88d8"/><rect x="10" y="12" width="4" height="13" fill="none" stroke="#3b3a39" stroke-width="1.5"/><rect x="16" y="8" width="4" height="17" fill="#a19f9d"/><rect x="21" y="14" width="4" height="11" fill="none" stroke="#3b3a39" stroke-width="1.5"/></svg>
<svg class="a" style="left:1700px;top:373px;" width="28" height="28" viewBox="0 0 28 28"><path d="M3 2v24h23" fill="none" stroke="#3b3a39" stroke-width="1.5"/><rect x="5" y="5" width="19" height="4" fill="none" stroke="#3b3a39" stroke-width="1.5"/><rect x="5" y="12" width="12" height="4" fill="#5ea0ef" stroke="#2b88d8"/><rect x="5" y="19" width="17" height="4" fill="none" stroke="#3b3a39" stroke-width="1.5"/></svg>
<svg class="a" style="left:1736px;top:373px;" width="28" height="28" viewBox="0 0 28 28"><path d="M2 26h24" stroke="#3b3a39" stroke-width="1.5"/><rect x="4" y="4" width="5" height="21" fill="none" stroke="#3b3a39" stroke-width="1.5"/><rect x="10" y="10" width="4" height="15" fill="#5ea0ef" stroke="#2b88d8"/><rect x="16" y="4" width="4" height="21" fill="none" stroke="#3b3a39" stroke-width="1.5"/><rect x="21" y="10" width="4" height="15" fill="#a19f9d"/></svg>
<svg class="a" style="left:1555px;top:410px;" width="28" height="28" viewBox="0 0 28 28"><path d="M3 2v24h23" fill="none" stroke="#3b3a39" stroke-width="1.5"/><path d="M4 20l6-8 5 5 5-7 5 4" fill="none" stroke="#3b3a39" stroke-width="1.5"/><path d="M4 14l6 3 5-6 5 5 5-6" fill="none" stroke="#2b88d8" stroke-width="1.5"/></svg>
<svg class="a" style="left:1591px;top:410px;" width="28" height="28" viewBox="0 0 28 28"><path d="M2 25l8-14 5 6 5-11 6 19z" fill="#a19f9d"/><path d="M2 25l8-14 7 14z" fill="#5ea0ef" stroke="#2b88d8"/><path d="M2 26h24" stroke="#3b3a39" stroke-width="1.5"/></svg>
<svg class="a" style="left:1627px;top:410px;" width="28" height="28" viewBox="0 0 28 28"><path d="M3 2v24h23" fill="none" stroke="#3b3a39" stroke-width="1.5"/><path d="M4 9l6 8 5-6 5 7 5-9v13H4z" fill="#5ea0ef" opacity=".8"/><path d="M4 9l6 8 5-6 5 7 5-9" fill="none" stroke="#3b3a39" stroke-width="1.5"/></svg>
<svg class="a" style="left:1663px;top:410px;" width="28" height="28" viewBox="0 0 28 28"><rect x="3" y="4" width="22" height="21" fill="none" stroke="#3b3a39" stroke-width="1.5"/><path d="M3 8l7 9 6-6 9 7v7H3z" fill="#5ea0ef"/></svg>
<svg class="a" style="left:1700px;top:410px;" width="28" height="28" viewBox="0 0 28 28"><path d="M2 26h24" stroke="#3b3a39" stroke-width="1.5"/><rect x="4" y="10" width="4" height="15" fill="none" stroke="#3b3a39" stroke-width="1.5"/><rect x="10" y="14" width="4" height="11" fill="#5ea0ef"/><rect x="16" y="6" width="4" height="19" fill="#a19f9d"/><path d="M3 22l7-6 6 4 9-10" fill="none" stroke="#3b3a39" stroke-width="1.5"/></svg>
<svg class="a" style="left:1736px;top:410px;" width="28" height="28" viewBox="0 0 28 28"><path d="M2 26h24" stroke="#3b3a39" stroke-width="1.5"/><rect x="4" y="12" width="4" height="13" fill="none" stroke="#3b3a39" stroke-width="1.5"/><rect x="10" y="6" width="4" height="19" fill="#5ea0ef"/><rect x="16" y="10" width="4" height="15" fill="#a19f9d"/><path d="M3 20l7-4 6 4 9-8" fill="none" stroke="#3b3a39" stroke-width="1.5"/></svg>
<svg class="a" style="left:1555px;top:446px;" width="28" height="28" viewBox="0 0 28 28"><path d="M3 2v24h23" fill="none" stroke="#3b3a39" stroke-width="1.5"/><path d="M4 5l5 5 6-3 5 4 5-5v10l-5 4-5-3-6 4-5-3z" fill="#5ea0ef"/><path d="M4 14l5 4 6-3 5 4 5-3v6H4z" fill="#e8833a" opacity=".9"/></svg>
<svg class="a" style="left:1591px;top:446px;" width="28" height="28" viewBox="0 0 28 28"><path d="M2 26h24" stroke="#3b3a39" stroke-width="1.5"/><path d="M4 25V12h5v6h4V5h5v8h4v12" fill="none" stroke="#3b3a39" stroke-width="1.5"/><rect x="13" y="18" width="4" height="7" fill="#a19f9d"/></svg>
<svg class="a" style="left:1627px;top:446px;" width="28" height="28" viewBox="0 0 28 28"><rect x="3" y="4" width="22" height="5" fill="#5ea0ef" stroke="#2b88d8"/><rect x="7" y="11" width="14" height="5" fill="#5ea0ef" stroke="#2b88d8"/><rect x="10" y="18" width="8" height="6" fill="#5ea0ef" stroke="#2b88d8"/></svg>
<svg class="a" style="left:1663px;top:446px;" width="28" height="28" viewBox="0 0 28 28"><path d="M3 2v24h23" fill="none" stroke="#3b3a39" stroke-width="1.5"/><rect x="7" y="8" width="3" height="3" fill="#3b3a39"/><rect x="13" y="12" width="3" height="3" fill="#5ea0ef"/><rect x="8" y="18" width="3" height="3" fill="#5ea0ef"/><rect x="18" y="17" width="3" height="3" fill="#3b3a39"/><rect x="20" y="8" width="3" height="3" fill="#5ea0ef"/></svg>
<svg class="a" style="left:1700px;top:446px;" width="28" height="28" viewBox="0 0 28 28"><circle cx="14" cy="14" r="11" fill="none" stroke="#3b3a39" stroke-width="1.6"/><path d="M14 14V3a11 11 0 0 1 9 17z" fill="#5ea0ef" stroke="#2b88d8"/></svg>
<svg class="a" style="left:1736px;top:446px;" width="28" height="28" viewBox="0 0 28 28"><circle cx="14" cy="14" r="10" fill="none" stroke="#5ea0ef" stroke-width="5"/><path d="M14 4a10 10 0 0 1 10 10" fill="none" stroke="#2b88d8" stroke-width="5"/></svg>
<svg class="a" style="left:1555px;top:482px;" width="28" height="28" viewBox="0 0 28 28"><rect x="3" y="3" width="22" height="22" fill="none" stroke="#3b3a39" stroke-width="1.5"/><rect x="4" y="4" width="10" height="9" fill="#5ea0ef"/><rect x="4" y="14" width="10" height="10" fill="#5ea0ef"/><path d="M14 3v22M14 11h11M19 11v14M14 18h11" stroke="#3b3a39" stroke-width="1.5"/></svg>
<svg class="a" style="left:1590px;top:481px;" width="31" height="31" viewBox="0 0 31 31"><rect x="0.5" y="0.5" width="30" height="30" fill="#f3f2f1" stroke="#3b3a39" stroke-width="1.2"/><circle cx="15.5" cy="14" r="9" fill="none" stroke="#3b3a39" stroke-width="1.6"/><path d="M9 11c3-3 8-2 7 2s5 4 6 1M12 19c1-3 4-3 5 0" fill="none" stroke="#2e9e4a" stroke-width="2.5"/><path d="M9 26h13M15.5 23v3" stroke="#3b3a39" stroke-width="1.5"/></svg>
<svg class="a" style="left:1627px;top:482px;" width="28" height="28" viewBox="0 0 28 28"><path d="M3 6l8-2 6 3 8-2v14l-4 5-6-2-4 3-6-3z" fill="#a19f9d" stroke="#3b3a39" stroke-width="1.5"/><path d="M3 6l8-2 6 3v10l-6 3-8-4z" fill="#5ea0ef" opacity=".9"/></svg>
<svg class="a" style="left:1663px;top:482px;" width="28" height="28" viewBox="0 0 28 28"><path d="M14 2L5 25l9-6 9 6z" fill="#2b88d8"/><path d="M14 2v17l9 6z" fill="#5ea0ef"/></svg>
<svg class="a" style="left:1700px;top:482px;" width="28" height="28" viewBox="0 0 28 28"><path d="M3 20a11 11 0 0 1 22 0" fill="none" stroke="#3b3a39" stroke-width="1.6"/><path d="M6 20a8 8 0 0 1 16 0" fill="none" stroke="#5ea0ef" stroke-width="4"/><path d="M14 20l5-6" stroke="#3b3a39" stroke-width="2"/></svg>
<svg class="a" style="left:1736px;top:482px;" width="28" height="28" viewBox="0 0 28 28"><rect x="2" y="5" width="24" height="18" fill="none" stroke="#3b3a39" stroke-width="1.5"/><text x="14" y="19" font-size="10" text-anchor="middle" fill="#2b88d8" font-family="Liberation Sans">123</text></svg>
<svg class="a" style="left:1555px;top:518px;" width="28" height="28" viewBox="0 0 28 28"><rect x="3" y="3" width="22" height="22" fill="none" stroke="#3b3a39" stroke-width="1.5"/><path d="M8 9h12M8 13h9M8 17h12M8 21h7" stroke="#2b88d8" stroke-width="1.8"/></svg>
<svg class="a" style="left:1591px;top:518px;" width="28" height="28" viewBox="0 0 28 28"><rect x="2" y="4" width="24" height="20" fill="none" stroke="#3b3a39" stroke-width="1.5"/><path d="M6 16l4-6 4 6z" fill="none" stroke="#2e9e4a" stroke-width="1.5"/><path d="M15 10h8l-4 6z" fill="#d13438"/><path d="M5 20h18" stroke="#2b88d8" stroke-width="1.5"/></svg>
<svg class="a" style="left:1627px;top:518px;" width="28" height="28" viewBox="0 0 28 28"><rect x="2" y="3" width="20" height="20" fill="none" stroke="#3b3a39" stroke-width="1.5"/><path d="M2 8h20M6 12h8M6 16h5" stroke="#3b3a39" stroke-width="1.5"/><path d="M14 15h12l-5 5v5l-2 1v-6z" fill="#fff" stroke="#3b3a39" stroke-width="1.5"/></svg>
<svg class="a" style="left:1663px;top:518px;" width="28" height="28" viewBox="0 0 28 28"><rect x="3" y="3" width="22" height="22" fill="none" stroke="#3b3a39" stroke-width="1.5"/><path d="M3 9h22M3 14h22M3 19h22M10 3v22M17 3v22" stroke="#3b3a39" stroke-width="1.3"/></svg>
<svg class="a" style="left:1700px;top:518px;" width="28" height="28" viewBox="0 0 28 28"><rect x="3" y="3" width="22" height="22" fill="#5ea0ef" stroke="#3b3a39" stroke-width="1.5"/><path d="M3 9h22M3 14h22M3 19h22M10 3v22M17 3v22" stroke="#fff" stroke-width="1.3"/><path d="M3 9h22M10 3v6" stroke="#3b3a39" stroke-width="1.3"/></svg>
<svg class="a" style="left:1736px;top:518px;" width="28" height="28" viewBox="0 0 28 28"><text x="14" y="21" font-size="19" font-weight="700" text-anchor="middle" fill="#2b88d8" font-family="Liberation Sans">R</text></svg>
<svg class="a" style="left:1555px;top:555px;" width="28" height="28" viewBox="0 0 28 28"><text x="13" y="22" font-size="19" font-weight="700" text-anchor="middle" fill="#2b88d8" font-family="Liberation Sans">Py</text></svg>
<svg class="a" style="left:1591px;top:555px;" width="28" height="28" viewBox="0 0 28 28"><path d="M3 2v24h23" fill="none" stroke="#3b3a39" stroke-width="1.5"/><path d="M6 8h10M6 14h6M6 20h12" stroke="#3b3a39" stroke-width="1.5"/><circle cx="20" cy="7" r="2.5" fill="#2b88d8"/><circle cx="15" cy="14" r="2.5" fill="#5ea0ef"/></svg>
<svg class="a" style="left:1627px;top:555px;" width="28" height="28" viewBox="0 0 28 28"><rect x="1" y="11" width="7" height="6" fill="#5ea0ef"/><rect x="12" y="11" width="7" height="6" fill="#5ea0ef"/><rect x="21" y="3" width="6" height="5" fill="#5ea0ef"/><rect x="21" y="11" width="6" height="6" fill="#2b88d8"/><rect x="21" y="20" width="6" height="5" fill="#5ea0ef"/><path d="M8 14h4M19 14h2M19 14l2-8M19 14l2 8" stroke="#3b3a39" stroke-width="1.2"/></svg>
<svg class="a" style="left:1663px;top:555px;" width="28" height="28" viewBox="0 0 28 28"><path d="M3 4h22v15H12l-6 5v-5H3z" fill="none" stroke="#3b3a39" stroke-width="1.5"/></svg>
<svg class="a" style="left:1700px;top:555px;" width="28" height="28" viewBox="0 0 28 28"><path d="M6 3h11l5 5v17H6z" fill="none" stroke="#3b3a39" stroke-width="1.5"/><path d="M10 13h8M10 17h8M10 21h5" stroke="#2b88d8" stroke-width="1.5"/></svg>
<svg class="a" style="left:1736px;top:555px;" width="28" height="28" viewBox="0 0 28 28"><path d="M8 3h12v8a6 6 0 0 1-12 0z" fill="none" stroke="#3b3a39" stroke-width="1.7"/><path d="M8 6H4c0 4 2 6 4 6M20 6h4c0 4-2 6-4 6M14 17v4M9 25h10v-4H9z" fill="none" stroke="#3b3a39" stroke-width="1.7"/></svg>
<svg class="a" style="left:1555px;top:591px;" width="28" height="28" viewBox="0 0 28 28"><path d="M5 2h12l6 6v18H5z" fill="none" stroke="#3b3a39" stroke-width="1.5"/><rect x="9" y="17" width="2" height="6" fill="#3b3a39"/><rect x="13" y="14" width="2" height="9" fill="#3b3a39"/><rect x="17" y="19" width="2" height="4" fill="#3b3a39"/></svg>
<svg class="a" style="left:1591px;top:591px;" width="28" height="28" viewBox="0 0 28 28"><rect x="3" y="8" width="22" height="16" fill="none" stroke="#3b3a39" stroke-width="1.5"/><text x="15" y="21" font-size="10" text-anchor="middle" fill="#2b88d8" font-family="Liberation Sans">123</text><path d="M9 1L4 9h4l-3 6 8-8H9l3-6z" fill="#f7b731" stroke="#e8833a" stroke-width=".8"/></svg>
<svg class="a" style="left:1627px;top:591px;" width="28" height="28" viewBox="0 0 28 28"><rect x="8" y="6" width="8" height="8" fill="none" stroke="#3b3a39" stroke-width="1.5"/><rect x="3" y="16" width="8" height="8" fill="none" stroke="#3b3a39" stroke-width="1.5"/><path d="M14 15h12l-5 5v5l-2 1v-6z" fill="#fff" stroke="#3b3a39" stroke-width="1.5"/><path d="M7 0L3 7h3l-2 5 6-6H7l2-6z" fill="#f7b731" stroke="#e8833a" stroke-width=".8"/></svg>
<svg class="a" style="left:1663px;top:591px;" width="28" height="28" viewBox="0 0 28 28"><rect x="3" y="4" width="22" height="21" fill="none" stroke="#3b3a39" stroke-width="1.5"/><path d="M5 22l6-8 4 3 8-10v15H5z" fill="#5ea0ef"/><path d="M4 2h5v6l-2.5 3L4 8z" fill="#e8833a"/><circle cx="22" cy="23" r="3" fill="#e8833a"/></svg>
<svg class="a" style="left:1700px;top:591px;" width="28" height="28" viewBox="0 0 28 28"><path d="M14 3l11 11-11 11L3 14z" fill="none" stroke="#b146c2" stroke-width="1.7"/><path d="M14 8l6 6-6 6-6-6z" fill="none" stroke="#b146c2" stroke-width="1.5"/></svg>
<svg class="a" style="left:1736px;top:591px;" width="28" height="28" viewBox="0 0 28 28"><path d="M3 5h13l9 9-9 9H3l9-9z" fill="none" stroke="#2b88d8" stroke-width="1.8"/><path d="M9 5l9 9-9 9" fill="none" stroke="#2b88d8" stroke-width="1.8"/></svg>
<div class="t" style="left:1558px;top:628.0px;font-size:14px;line-height:24px;color:#2d2c2b;letter-spacing:2px;">···</div>
<div class="a" style="left:1769px;top:676px;width:7px;height:270px;background:#c8c6c4;border-radius:3px"></div>
<div class="t" style="left:1559px;top:677.0px;font-size:15.4px;line-height:24px;color:#3b3a39;">Ubicación</div>
<div class="a" style="left:1548px;top:706px;width:221px;height:47px;background:#ffffff;border:1px dashed #c8c6c4;border-radius:2px"></div>
<div class="a" style="left:1553px;top:711px;width:212px;height:30px;background:#e9e7e5;border:1px solid #d2d0ce;border-radius:3px"></div>
<div class="t" style="left:1559px;top:714.0px;font-size:15.2px;line-height:24px;color:#2d2c2b;">Estado</div>
<svg class="a" style="left:1723px;top:720px;" width="18" height="12" viewBox="0 0 18 12"><path d="M2 2l7 7 7-7" fill="none" stroke="#605e5c" stroke-width="1.5"/></svg>
<svg class="a" style="left:1747px;top:719px;" width="13" height="13" viewBox="0 0 13 13"><path d="M1.5 1.5l10 10M11.5 1.5l-10 10" stroke="#605e5c" stroke-width="1.5"/></svg>
<div class="t" style="left:1559px;top:767.0px;font-size:15.4px;line-height:24px;color:#3b3a39;">Leyenda</div>
<div class="a" style="left:1548px;top:796px;width:221px;height:37px;background:#ffffff;border:1px dashed #c8c6c4;border-radius:2px"></div>
<div class="t" style="left:1563px;top:803.0px;font-size:15.4px;line-height:24px;color:#3b3a39;">Agregar campos de datos a...</div>
<div class="t" style="left:1559px;top:844.0px;font-size:15.4px;line-height:24px;color:#3b3a39;">Latitud</div>
<div class="a" style="left:1548px;top:873px;width:221px;height:37px;background:#ffffff;border:1px dashed #c8c6c4;border-radius:2px"></div>
<div class="t" style="left:1563px;top:880.0px;font-size:15.4px;line-height:24px;color:#3b3a39;">Agregar campos de datos a...</div>
<div class="t" style="left:1559px;top:921.0px;font-size:15.4px;line-height:24px;color:#3b3a39;">Longitud</div>
<div class="a" style="left:1548px;top:951px;width:221px;height:37px;background:#ffffff;border:1px dashed #c8c6c4;border-radius:2px"></div>
<div class="t" style="left:1563px;top:958.0px;font-size:15.4px;line-height:24px;color:#3b3a39;">Agregar campos de datos a...</div>
<div class="t" style="left:1559px;top:999.0px;font-size:15.4px;line-height:24px;color:#3b3a39;">Tamaño de burbuja</div>
<div class="a" style="left:1777px;top:229px;width:249px;height:788px;background:#f3f2f1;border-left:1px solid #e1dfdd"></div>
<div class="t" style="left:1789px;top:243.0px;font-size:20px;line-height:24px;color:#2d2c2b;letter-spacing:0.2px;-webkit-text-stroke:0.6px #252423">Datos</div>
<div class="a" style="left:1784px;top:289px;width:260px;height:30px;background:#fff;border:1px solid #e1dfdd;border-bottom:1.5px solid #8a8886;border-radius:4px"></div>
<svg class="a" style="left:1799px;top:294px;" width="20" height="20" viewBox="0 0 20 20"><circle cx="8" cy="8" r="6" fill="none" stroke="#605e5c" stroke-width="1.5"/><path d="M12.5 12.5l5.5 5.5" stroke="#605e5c" stroke-width="1.6"/></svg>
<div class="t" style="left:1827px;top:292.0px;font-size:16.4px;line-height:24px;color:#707070;">Buscar</div>
<svg class="a" style="left:1796px;top:342px;" width="14" height="9" viewBox="0 0 14 9"><path d="M1 1l6 6 6-6" fill="none" stroke="#605e5c" stroke-width="1.3"/></svg>
<svg class="a" style="left:1815px;top:339px;" width="17" height="17" viewBox="0 0 17 17"><rect x="1.5" y="1.5" width="14" height="14" rx="2" fill="none" stroke="#252423" stroke-width="1.4"/><path d="M1.5 6h14M1.5 10.5h14M6 1.5v14M10.5 1.5v14" stroke="#252423" stroke-width="1.3"/></svg>
<svg class="a" style="left:1824px;top:347px;" width="14" height="14" viewBox="0 0 14 14"><circle cx="7" cy="7" r="7" fill="#117865"/><path d="M3.8 7.2l2.2 2.2 4.3-4.3" fill="none" stroke="#fff" stroke-width="1.5"/></svg>
<div class="t" style="left:1839px;top:335.0px;font-size:15.4px;line-height:24px;color:#2d2c2b;">Medidas</div>
<svg class="a" style="left:1836px;top:371px;" width="15" height="15" viewBox="0 0 15 15"><rect x=".5" y=".5" width="14" height="14" rx="2" fill="none" stroke="#8a8886" stroke-width="1"/></svg>
<div class="t" style="left:1884px;top:366.0px;font-size:15.4px;line-height:24px;color:#2d2c2b;">Columna1</div>
<svg class="a" style="left:1836px;top:402px;" width="15" height="15" viewBox="0 0 15 15"><rect x="0" y="0" width="15" height="15" rx="2" fill="#117865"/><path d="M3.5 7.5l2.7 2.7 5.5-5.5" fill="none" stroke="#fff" stroke-width="1.6"/></svg>
<svg class="a" style="left:1861px;top:401px;" width="15" height="17" viewBox="0 0 15 17"><rect x="1" y="1" width="13" height="15" rx="2" fill="none" stroke="#252423" stroke-width="1.3"/><rect x="4" y="3.5" width="7" height="2.5" fill="#252423"/><path d="M4 9h1.5M7 9h1.5M10 9h1.5M4 12h1.5M7 12h1.5M10 12h1.5" stroke="#252423" stroke-width="1.5"/></svg>
<div class="t" style="left:1884px;top:397.0px;font-size:15.4px;line-height:24px;color:#2d2c2b;">Total Empleados</div>
<svg class="a" style="left:1796px;top:435px;" width="14" height="9" viewBox="0 0 14 9"><path d="M1 1l6 6 6-6" fill="none" stroke="#605e5c" stroke-width="1.3"/></svg>
<svg class="a" style="left:1815px;top:432px;" width="17" height="17" viewBox="0 0 17 17"><rect x="1.5" y="1.5" width="14" height="14" rx="2" fill="none" stroke="#252423" stroke-width="1.4"/><path d="M1.5 6h14M1.5 10.5h14M6 1.5v14M10.5 1.5v14" stroke="#252423" stroke-width="1.3"/></svg>
<svg class="a" style="left:1824px;top:440px;" width="14" height="14" viewBox="0 0 14 14"><circle cx="7" cy="7" r="7" fill="#117865"/><path d="M3.8 7.2l2.2 2.2 4.3-4.3" fill="none" stroke="#fff" stroke-width="1.5"/></svg>
<div class="t" style="left:1839px;top:428.0px;font-size:15.4px;line-height:24px;color:#2d2c2b;">Tabla Empleados</div>
<svg class="a" style="left:1836px;top:464px;" width="15" height="15" viewBox="0 0 15 15"><rect x=".5" y=".5" width="14" height="14" rx="2" fill="none" stroke="#8a8886" stroke-width="1"/></svg>
<div class="t" style="left:1884px;top:459.0px;font-size:15.4px;line-height:24px;color:#2d2c2b;">Departamento</div>
<svg class="a" style="left:1836px;top:495px;" width="15" height="15" viewBox="0 0 15 15"><rect x="0" y="0" width="15" height="15" rx="2" fill="#117865"/><path d="M3.5 7.5l2.7 2.7 5.5-5.5" fill="none" stroke="#fff" stroke-width="1.6"/></svg>
<svg class="a" style="left:1860px;top:494px;" width="17" height="17" viewBox="0 0 17 17"><circle cx="8.5" cy="8.5" r="7" fill="none" stroke="#252423" stroke-width="1.4"/><ellipse cx="8.5" cy="8.5" rx="3" ry="7" fill="none" stroke="#252423" stroke-width="1.2"/><path d="M1.5 8.5h14M2.5 5h12M2.5 12h12" stroke="#252423" stroke-width="1.1"/></svg>
<div class="t" style="left:1884px;top:490.0px;font-size:15.4px;line-height:24px;color:#2d2c2b;">Estado</div>
<svg class="a" style="left:1836px;top:526px;" width="15" height="15" viewBox="0 0 15 15"><rect x=".5" y=".5" width="14" height="14" rx="2" fill="none" stroke="#8a8886" stroke-width="1"/></svg>
<div class="t" style="left:1884px;top:521.0px;font-size:15.4px;line-height:24px;color:#2d2c2b;">Género</div>
<svg class="a" style="left:1836px;top:558px;" width="15" height="15" viewBox="0 0 15 15"><rect x=".5" y=".5" width="14" height="14" rx="2" fill="none" stroke="#8a8886" stroke-width="1"/></svg>
<div class="t" style="left:1884px;top:553.0px;font-size:15.4px;line-height:24px;color:#2d2c2b;">ID Empleado</div>
<svg class="a" style="left:1818px;top:589px;" width="9" height="15" viewBox="0 0 9 15"><path d="M1 1l6 6-6 6" fill="none" stroke="#605e5c" stroke-width="1.3"/></svg>
<svg class="a" style="left:1836px;top:589px;" width="15" height="15" viewBox="0 0 15 15"><rect x=".5" y=".5" width="14" height="14" rx="2" fill="none" stroke="#8a8886" stroke-width="1"/></svg>
<svg class="a" style="left:1861px;top:588px;" width="15" height="16" viewBox="0 0 15 16"><rect x="1" y="1.5" width="13" height="13" rx="2" fill="none" stroke="#252423" stroke-width="1.3"/><path d="M1 5h13" stroke="#252423" stroke-width="1.5"/><path d="M4 8h1.5M7 8h1.5M10 8h1.5M4 11h1.5M7 11h1.5" stroke="#252423" stroke-width="1.3"/></svg>
<div class="t" style="left:1884px;top:584.0px;font-size:15.4px;line-height:24px;color:#2d2c2b;">Nacimiento</div>
<svg class="a" style="left:1836px;top:620px;" width="15" height="15" viewBox="0 0 15 15"><rect x=".5" y=".5" width="14" height="14" rx="2" fill="none" stroke="#8a8886" stroke-width="1"/></svg>
<div class="t" style="left:1884px;top:615.0px;font-size:15.4px;line-height:24px;color:#2d2c2b;">Nombre Empleado</div>
<svg class="a" style="left:1836px;top:651px;" width="15" height="15" viewBox="0 0 15 15"><rect x=".5" y=".5" width="14" height="14" rx="2" fill="none" stroke="#8a8886" stroke-width="1"/></svg>
<div class="t" style="left:1884px;top:646.0px;font-size:15.4px;line-height:24px;color:#2d2c2b;">Nombre Jefe</div>
<svg class="a" style="left:1836px;top:682px;" width="15" height="15" viewBox="0 0 15 15"><rect x=".5" y=".5" width="14" height="14" rx="2" fill="none" stroke="#8a8886" stroke-width="1"/></svg>
<div class="t" style="left:1884px;top:677.0px;font-size:15.4px;line-height:24px;color:#2d2c2b;">Posición</div>
<svg class="a" style="left:1799px;top:714px;" width="9" height="15" viewBox="0 0 9 15"><path d="M1 1l6 6-6 6" fill="none" stroke="#605e5c" stroke-width="1.3"/></svg>
<svg class="a" style="left:1815px;top:713px;" width="17" height="17" viewBox="0 0 17 17"><rect x="1.5" y="1.5" width="14" height="14" rx="2" fill="none" stroke="#252423" stroke-width="1.4"/><path d="M1.5 6h14M1.5 10.5h14M6 1.5v14M10.5 1.5v14" stroke="#252423" stroke-width="1.3"/></svg>
<div class="t" style="left:1839px;top:709.0px;font-size:15.4px;line-height:24px;color:#2d2c2b;">Tabla Evaluacion</div>
<svg class="a" style="left:1799px;top:745px;" width="9" height="15" viewBox="0 0 9 15"><path d="M1 1l6 6-6 6" fill="none" stroke="#605e5c" stroke-width="1.3"/></svg>
<svg class="a" style="left:1815px;top:744px;" width="17" height="17" viewBox="0 0 17 17"><rect x="1.5" y="1.5" width="14" height="14" rx="2" fill="none" stroke="#252423" stroke-width="1.4"/><path d="M1.5 6h14M1.5 10.5h14M6 1.5v14M10.5 1.5v14" stroke="#252423" stroke-width="1.3"/></svg>
<div class="t" style="left:1839px;top:740.0px;font-size:15.4px;line-height:24px;color:#2d2c2b;">Tabla Sueldo</div>
<div class="a" style="left:1531px;top:663px;width:256px;height:107px;background:none;border:10px solid #ff0000"></div>
<div class="t" style="left:148px;top:264.0px;font-size:15.6px;line-height:24px;color:#3b3a39;letter-spacing:0.05px;-webkit-text-stroke:0.35px #3b3a39">Total Empleados por Departamento</div>
<svg class="a" style="left:187px;top:297px;" width="418" height="2" viewBox="0 0 418 2"><path d="M0 0.5H418" stroke="#cfcfcf" stroke-width="1.2" stroke-dasharray="1.6 3.2"/></svg>
<div class="t" style="left:-420px;width:600px;text-align:right;top:285.0px;font-size:12px;line-height:24px;color:#605e5c;">80</div>
<svg class="a" style="left:187px;top:338px;" width="418" height="2" viewBox="0 0 418 2"><path d="M0 0.5H418" stroke="#cfcfcf" stroke-width="1.2" stroke-dasharray="1.6 3.2"/></svg>
<div class="t" style="left:-420px;width:600px;text-align:right;top:326.0px;font-size:12px;line-height:24px;color:#605e5c;">60</div>
<svg class="a" style="left:187px;top:379px;" width="418" height="2" viewBox="0 0 418 2"><path d="M0 0.5H418" stroke="#cfcfcf" stroke-width="1.2" stroke-dasharray="1.6 3.2"/></svg>
<div class="t" style="left:-420px;width:600px;text-align:right;top:367.0px;font-size:12px;line-height:24px;color:#605e5c;">40</div>
<svg class="a" style="left:187px;top:420px;" width="418" height="2" viewBox="0 0 418 2"><path d="M0 0.5H418" stroke="#cfcfcf" stroke-width="1.2" stroke-dasharray="1.6 3.2"/></svg>
<div class="t" style="left:-420px;width:600px;text-align:right;top:408.0px;font-size:12px;line-height:24px;color:#605e5c;">20</div>
<svg class="a" style="left:187px;top:461px;" width="418" height="2" viewBox="0 0 418 2"><path d="M0 0.5H418" stroke="#cfcfcf" stroke-width="1.2" stroke-dasharray="1.6 3.2"/></svg>
<div class="t" style="left:-420px;width:600px;text-align:right;top:449.0px;font-size:12px;line-height:24px;color:#605e5c;">0</div>
<div class="t" style="left:95px;top:366px;width:120px;height:24px;line-height:24px;text-align:center;font-size:13px;color:#3b3a39;-webkit-text-stroke:0.3px #3b3a39;transform:rotate(-90deg)">Total Empleados</div>
<div class="a" style="left:214px;top:311px;width:49px;height:150px;background:#118dff;"></div>
<div class="a" style="left:277px;top:379px;width:49px;height:82px;background:#118dff;"></div>
<div class="a" style="left:341px;top:389.5px;width:49px;height:71.5px;background:#118dff;"></div>
<div class="a" style="left:404.5px;top:420px;width:49px;height:41px;background:#118dff;"></div>
<div class="a" style="left:468px;top:422px;width:49px;height:39px;background:#118dff;"></div>
<div class="a" style="left:531.5px;top:446.5px;width:49px;height:14.5px;background:#118dff;"></div>
<div class="t" style="left:-62px;width:600px;text-align:center;top:467.5px;font-size:11.6px;line-height:24px;color:#605e5c;letter-spacing:0px;">Production</div>
<div class="t" style="left:2px;width:600px;text-align:center;top:467.5px;font-size:11.6px;line-height:24px;color:#605e5c;letter-spacing:0px;">Tecnología</div>
<div class="t" style="left:2px;width:600px;text-align:center;top:483.0px;font-size:11.6px;line-height:24px;color:#605e5c;letter-spacing:0px;">de la</div>
<div class="t" style="left:2px;width:600px;text-align:center;top:498.5px;font-size:11.6px;line-height:24px;color:#605e5c;letter-spacing:0px;">informaci...</div>
<div class="t" style="left:66px;width:600px;text-align:center;top:467.5px;font-size:11.6px;line-height:24px;color:#605e5c;letter-spacing:0px;">Oficina</div>
<div class="t" style="left:66px;width:600px;text-align:center;top:483.0px;font-size:11.6px;line-height:24px;color:#605e5c;letter-spacing:0px;">administr...</div>
<div class="t" style="left:129px;width:600px;text-align:center;top:467.5px;font-size:11.6px;line-height:24px;color:#605e5c;letter-spacing:0px;">Ventas</div>
<div class="t" style="left:193px;width:600px;text-align:center;top:467.5px;font-size:11.6px;line-height:24px;color:#605e5c;letter-spacing:0px;">Ingeniería</div>
<div class="t" style="left:193px;width:600px;text-align:center;top:483.0px;font-size:11.6px;line-height:24px;color:#605e5c;letter-spacing:0px;">de</div>
<div class="t" style="left:193px;width:600px;text-align:center;top:498.5px;font-size:11.6px;line-height:24px;color:#605e5c;letter-spacing:0px;">softwar</div>
<div class="t" style="left:256px;width:600px;text-align:center;top:467.5px;font-size:11.6px;line-height:24px;color:#605e5c;letter-spacing:0px;">Executive</div>
<div class="t" style="left:256px;width:600px;text-align:center;top:483.0px;font-size:11.6px;line-height:24px;color:#605e5c;letter-spacing:0px;">Office</div>
<div class="t" style="left:667px;top:318.0px;font-size:15.6px;line-height:24px;color:#3b3a39;letter-spacing:-0.1px;-webkit-text-stroke:0.35px #3b3a39">Total Empleados por Género</div>
<svg class="a" style="left:0;top:0" width="2048" height="1039" viewBox="0 0 2048 1039" style="pointer-events:none"><path d="M758.00 356.50 A42 42 0 1 1 743.35 437.86 L749.28 421.93 A25 25 0 1 0 758.00 373.50Z" fill="#118dff"/><path d="M743.35 437.86 A42 42 0 0 1 758.00 356.50 L758.00 373.50 A25 25 0 0 0 749.28 421.93Z" fill="#12239e"/><path d="M716 361H728L731 364" fill="none" stroke="#a19f9d" stroke-width="1"/><path d="M781 437L785 441H795" fill="none" stroke="#a19f9d" stroke-width="1"/></svg>
<div class="t" style="left:112px;width:600px;text-align:right;top:343.0px;font-size:11.4px;line-height:24px;color:#605e5c;">86</div>
<div class="t" style="left:113px;width:600px;text-align:right;top:358.0px;font-size:11.4px;line-height:24px;color:#605e5c;letter-spacing:-0.3px;">(44.33%)</div>
<div class="t" style="left:797px;top:428.0px;font-size:11.4px;line-height:24px;color:#605e5c;letter-spacing:-0.3px;">108 (5...)</div>
<div class="t" style="left:850px;top:363.0px;font-size:12px;line-height:24px;color:#4a4846;font-weight:700;letter-spacing:0px;">Género</div>
<div class="a" style="left:851px;top:391px;width:9px;height:9px;background:#118dff;border-radius:50%"></div>
<div class="t" style="left:862px;top:383.0px;font-size:12px;line-height:24px;color:#605e5c;letter-spacing:0.3px;">Femenino</div>
<div class="a" style="left:851px;top:415px;width:9px;height:9px;background:#12239e;border-radius:50%"></div>
<div class="t" style="left:862px;top:407.0px;font-size:12px;line-height:24px;color:#605e5c;letter-spacing:0.3px;">Masculino</div>
<svg class="a" style="left:0;top:0" width="2048" height="1039" viewBox="0 0 2048 1039"><path d="M1020.8 355.5L1029.4 349.6V383.7" fill="none" stroke="#252423" stroke-width="5.2" stroke-linejoin="bevel"/><ellipse cx="1056" cy="359.5" rx="8.1" ry="9.2" fill="none" stroke="#252423" stroke-width="5.2"/><path d="M1063.8 363.5L1052 383.7" fill="none" stroke="#252423" stroke-width="5.2"/><path d="M1087.5 349L1074.5 376.4H1095.3M1090.2 364V383.7" fill="none" stroke="#252423" stroke-width="5.2"/></svg>
<div class="t" style="left:756px;width:600px;text-align:center;top:393.0px;font-size:14.6px;line-height:24px;color:#605e5c;">Total Empleados</div>
<div class="t" style="left:642px;top:540.5px;font-size:12.4px;line-height:24px;color:#2d2c2b;letter-spacing:0px;">Nombre Empleado</div>
<div class="t" style="left:770px;top:540.5px;font-size:12.4px;line-height:24px;color:#2d2c2b;letter-spacing:0px;">Género</div>
<div class="t" style="left:837px;top:540.5px;font-size:12.4px;line-height:24px;color:#2d2c2b;letter-spacing:0px;">Estado</div>
<div class="t" style="left:1019px;top:540.5px;font-size:12.4px;line-height:24px;color:#2d2c2b;letter-spacing:0px;">Departamento</div>
<svg class="a" style="left:1019px;top:561px;" width="8" height="5" viewBox="0 0 8 5"><path d="M0 4.5L4 0.5L8 4.5z" fill="#252423"/></svg>
<div class="a" style="left:637px;top:566px;width:510px;height:2px;background:#7cb9f0;"></div>
<div class="t" style="left:642px;top:565.925px;font-size:12.4px;line-height:24px;color:#3b3a39;letter-spacing:0px;">Carter Michelle</div>
<div class="t" style="left:770px;top:565.925px;font-size:12.4px;line-height:24px;color:#3b3a39;letter-spacing:0px;">Femenino</div>
<div class="t" style="left:837px;top:565.925px;font-size:12.4px;line-height:24px;color:#3b3a39;letter-spacing:-0.2px;">California, Estados Unidos</div>
<div class="t" style="left:1019px;top:565.925px;font-size:12.4px;line-height:24px;color:#3b3a39;letter-spacing:0px;">Executive Office</div>
<div class="a" style="left:637px;top:586.35px;width:510px;height:18.85px;background:#eeedec;"></div>
<div class="t" style="left:642px;top:584.775px;font-size:12.4px;line-height:24px;color:#3b3a39;letter-spacing:0px;">Digitale Alfred</div>
<div class="t" style="left:770px;top:584.775px;font-size:12.4px;line-height:24px;color:#3b3a39;letter-spacing:0px;">Masculino</div>
<div class="t" style="left:837px;top:584.775px;font-size:12.4px;line-height:24px;color:#3b3a39;letter-spacing:-0.2px;">California, Estados Unidos</div>
<div class="t" style="left:1019px;top:584.775px;font-size:12.4px;line-height:24px;color:#3b3a39;letter-spacing:0px;">Executive Office</div>
<div class="t" style="left:642px;top:603.625px;font-size:12.4px;line-height:24px;color:#3b3a39;letter-spacing:0px;">Houlihan Debra</div>
<div class="t" style="left:770px;top:603.625px;font-size:12.4px;line-height:24px;color:#3b3a39;letter-spacing:0px;">Femenino</div>
<div class="t" style="left:837px;top:603.625px;font-size:12.4px;line-height:24px;color:#3b3a39;letter-spacing:-0.2px;">Texas, Estados Unidos</div>
<div class="t" style="left:1019px;top:603.625px;font-size:12.4px;line-height:24px;color:#3b3a39;letter-spacing:0px;">Executive Office</div>
<div class="a" style="left:637px;top:624.05px;width:510px;height:18.85px;background:#eeedec;"></div>
<div class="t" style="left:642px;top:622.4749999999999px;font-size:12.4px;line-height:24px;color:#3b3a39;letter-spacing:0px;">King Janet</div>
<div class="t" style="left:770px;top:622.4749999999999px;font-size:12.4px;line-height:24px;color:#3b3a39;letter-spacing:0px;">Femenino</div>
<div class="t" style="left:837px;top:622.4749999999999px;font-size:12.4px;line-height:24px;color:#3b3a39;letter-spacing:-0.2px;">Massachusetts, Estados Unidos</div>
<div class="t" style="left:1019px;top:622.4749999999999px;font-size:12.4px;line-height:24px;color:#3b3a39;letter-spacing:0px;">Executive Office</div>
<div class="t" style="left:642px;top:641.3249999999999px;font-size:12.4px;line-height:24px;color:#3b3a39;letter-spacing:0px;">Martins Joseph</div>
<div class="t" style="left:770px;top:641.3249999999999px;font-size:12.4px;line-height:24px;color:#3b3a39;letter-spacing:0px;">Masculino</div>
<div class="t" style="left:837px;top:641.3249999999999px;font-size:12.4px;line-height:24px;color:#3b3a39;letter-spacing:-0.2px;">Texas, Estados Unidos</div>
<div class="t" style="left:1019px;top:641.3249999999999px;font-size:12.4px;line-height:24px;color:#3b3a39;letter-spacing:0px;">Executive Office</div>
<div class="a" style="left:637px;top:661.75px;width:510px;height:18.85px;background:#eeedec;"></div>
<div class="t" style="left:642px;top:660.175px;font-size:12.4px;line-height:24px;color:#3b3a39;letter-spacing:0px;">Smith John</div>
<div class="t" style="left:770px;top:660.175px;font-size:12.4px;line-height:24px;color:#3b3a39;letter-spacing:0px;">Masculino</div>
<div class="t" style="left:837px;top:660.175px;font-size:12.4px;line-height:24px;color:#3b3a39;letter-spacing:-0.2px;">Massachusetts, Estados Unidos</div>
<div class="t" style="left:1019px;top:660.175px;font-size:12.4px;line-height:24px;color:#3b3a39;letter-spacing:0px;">Executive Office</div>
<div class="t" style="left:642px;top:679.025px;font-size:12.4px;line-height:24px;color:#3b3a39;letter-spacing:0px;">Zamora Jennifer</div>
<div class="t" style="left:770px;top:679.025px;font-size:12.4px;line-height:24px;color:#3b3a39;letter-spacing:0px;">Femenino</div>
<div class="t" style="left:837px;top:679.025px;font-size:12.4px;line-height:24px;color:#3b3a39;letter-spacing:-0.2px;">California, Estados Unidos</div>
<div class="t" style="left:1019px;top:679.025px;font-size:12.4px;line-height:24px;color:#3b3a39;letter-spacing:0px;">Executive Office</div>
<div class="a" style="left:637px;top:699.45px;width:510px;height:18.85px;background:#eeedec;"></div>
<div class="t" style="left:642px;top:697.875px;font-size:12.4px;line-height:24px;color:#3b3a39;letter-spacing:0px;">Andreola Colby</div>
<div class="t" style="left:770px;top:697.875px;font-size:12.4px;line-height:24px;color:#3b3a39;letter-spacing:0px;">Femenino</div>
<div class="t" style="left:837px;top:697.875px;font-size:12.4px;line-height:24px;color:#3b3a39;letter-spacing:-0.2px;">California, Estados Unidos</div>
<div class="t" style="left:1019px;top:697.875px;font-size:12.4px;line-height:24px;color:#3b3a39;letter-spacing:0px;">Ingeniería de software</div>
<div class="t" style="left:642px;top:716.7249999999999px;font-size:12.4px;line-height:24px;color:#3b3a39;letter-spacing:0px;">Baczenski Rachael</div>
<div class="t" style="left:770px;top:716.7249999999999px;font-size:12.4px;line-height:24px;color:#3b3a39;letter-spacing:0px;">Femenino</div>
<div class="t" style="left:837px;top:716.7249999999999px;font-size:12.4px;line-height:24px;color:#3b3a39;letter-spacing:-0.2px;">Texas, Estados Unidos</div>
<div class="t" style="left:1019px;top:716.7249999999999px;font-size:12.4px;line-height:24px;color:#3b3a39;letter-spacing:0px;">Ingeniería de software</div>
<div class="a" style="left:637px;top:737.15px;width:510px;height:18.85px;background:#eeedec;"></div>
<div class="t" style="left:642px;top:735.5749999999999px;font-size:12.4px;line-height:24px;color:#3b3a39;letter-spacing:0px;">Bernstein Sean</div>
<div class="t" style="left:770px;top:735.5749999999999px;font-size:12.4px;line-height:24px;color:#3b3a39;letter-spacing:0px;">Masculino</div>
<div class="t" style="left:837px;top:735.5749999999999px;font-size:12.4px;line-height:24px;color:#3b3a39;letter-spacing:-0.2px;">Texas, Estados Unidos</div>
<div class="t" style="left:1019px;top:735.5749999999999px;font-size:12.4px;line-height:24px;color:#3b3a39;letter-spacing:0px;">Ingeniería de software</div>
<div class="t" style="left:642px;top:754.425px;font-size:12.4px;line-height:24px;color:#3b3a39;letter-spacing:0px;">Carabbio Judith</div>
<div class="t" style="left:770px;top:754.425px;font-size:12.4px;line-height:24px;color:#3b3a39;letter-spacing:0px;">Femenino</div>
<div class="t" style="left:837px;top:754.425px;font-size:12.4px;line-height:24px;color:#3b3a39;letter-spacing:-0.2px;">Texas, Estados Unidos</div>
<div class="t" style="left:1019px;top:754.425px;font-size:12.4px;line-height:24px;color:#3b3a39;letter-spacing:0px;">Ingeniería de software</div>
<div class="a" style="left:637px;top:774.85px;width:510px;height:18.85px;background:#eeedec;"></div>
<div class="t" style="left:642px;top:773.275px;font-size:12.4px;line-height:24px;color:#3b3a39;letter-spacing:0px;">Chan Lin</div>
<div class="t" style="left:770px;top:773.275px;font-size:12.4px;line-height:24px;color:#3b3a39;letter-spacing:0px;">Femenino</div>
<div class="t" style="left:837px;top:773.275px;font-size:12.4px;line-height:24px;color:#3b3a39;letter-spacing:-0.2px;">California, Estados Unidos</div>
<div class="t" style="left:1019px;top:773.275px;font-size:12.4px;line-height:24px;color:#3b3a39;letter-spacing:0px;">Ingeniería de software</div>
<div class="t" style="left:642px;top:792.125px;font-size:12.4px;line-height:24px;color:#3b3a39;letter-spacing:0px;">Cockel James</div>
<div class="t" style="left:770px;top:792.125px;font-size:12.4px;line-height:24px;color:#3b3a39;letter-spacing:0px;">Masculino</div>
<div class="t" style="left:837px;top:792.125px;font-size:12.4px;line-height:24px;color:#3b3a39;letter-spacing:-0.2px;">Texas, Estados Unidos</div>
<div class="t" style="left:1019px;top:792.125px;font-size:12.4px;line-height:24px;color:#3b3a39;letter-spacing:0px;">Ingeniería de software</div>
<div class="a" style="left:637px;top:812.55px;width:510px;height:18.85px;background:#eeedec;"></div>
<div class="t" style="left:642px;top:810.9749999999999px;font-size:12.4px;line-height:24px;color:#3b3a39;letter-spacing:0px;">Del Bosque Keyla</div>
<div class="t" style="left:770px;top:810.9749999999999px;font-size:12.4px;line-height:24px;color:#3b3a39;letter-spacing:0px;">Femenino</div>
<div class="t" style="left:837px;top:810.9749999999999px;font-size:12.4px;line-height:24px;color:#3b3a39;letter-spacing:-0.2px;">California, Estados Unidos</div>
<div class="t" style="left:1019px;top:810.9749999999999px;font-size:12.4px;line-height:24px;color:#3b3a39;letter-spacing:0px;">Ingeniería de software</div>
<div class="t" style="left:642px;top:829.825px;font-size:12.4px;line-height:24px;color:#3b3a39;letter-spacing:0px;">Exantus Susan</div>
<div class="t" style="left:770px;top:829.825px;font-size:12.4px;line-height:24px;color:#3b3a39;letter-spacing:0px;">Femenino</div>
<div class="t" style="left:837px;top:829.825px;font-size:12.4px;line-height:24px;color:#3b3a39;letter-spacing:-0.2px;">Texas, Estados Unidos</div>
<div class="t" style="left:1019px;top:829.825px;font-size:12.4px;line-height:24px;color:#3b3a39;letter-spacing:0px;">Ingeniería de software</div>
<div class="a" style="left:637px;top:850.25px;width:510px;height:15.75px;background:#eeedec;"></div>
<div class="t" style="left:642px;top:848.675px;font-size:12.4px;line-height:24px;color:#3b3a39;letter-spacing:0px;">Lydon Allison</div>
<div class="t" style="left:770px;top:848.675px;font-size:12.4px;line-height:24px;color:#3b3a39;letter-spacing:0px;">Femenino</div>
<div class="t" style="left:837px;top:848.675px;font-size:12.4px;line-height:24px;color:#3b3a39;letter-spacing:-0.2px;">California, Estados Unidos</div>
<div class="t" style="left:1019px;top:848.675px;font-size:12.4px;line-height:24px;color:#3b3a39;letter-spacing:0px;">Ingeniería de software</div>
<div class="a" style="left:1173px;top:543px;width:7px;height:20px;background:#bdbbb9;border-radius:3px"></div>
<div class="t" style="left:355px;top:512.0px;font-size:13px;line-height:24px;color:#3b3a39;letter-spacing:-0.1px;-webkit-text-stroke:0.25px #3b3a39">Departamento</div>
<svg class="a" style="left:512px;top:514px;" width="21" height="17" viewBox="0 0 21 17"><path d="M1 1h19l-7 8v7h-5v-7z" fill="none" stroke="#605e5c" stroke-width="1.4" stroke-linejoin="round"/></svg>
<svg class="a" style="left:549px;top:514px;" width="19" height="17" viewBox="0 0 19 17"><path d="M1 5v11h11M8 1h10v10" fill="none" stroke="#605e5c" stroke-width="1.4"/><path d="M8 10l10-9" stroke="#605e5c" stroke-width="1.3"/></svg>
<div class="t" style="left:585px;top:509.0px;font-size:16px;line-height:24px;color:#605e5c;letter-spacing:1.5px;">···</div>
<div class="a" style="left:142px;top:538px;width:471px;height:332px;background:none;border:1px solid #c8c6c4"></div>
<div class="a" style="left:142px;top:538px;width:9px;height:3px;background:#8a8886;"></div>
<div class="a" style="left:142px;top:538px;width:3px;height:9px;background:#8a8886;"></div>
<div class="a" style="left:604px;top:538px;width:9px;height:3px;background:#8a8886;"></div>
<div class="a" style="left:610px;top:538px;width:3px;height:9px;background:#8a8886;"></div>
<div class="a" style="left:142px;top:867px;width:9px;height:3px;background:#8a8886;"></div>
<div class="a" style="left:142px;top:861px;width:3px;height:9px;background:#8a8886;"></div>
<div class="a" style="left:604px;top:867px;width:9px;height:3px;background:#8a8886;"></div>
<div class="a" style="left:610px;top:861px;width:3px;height:9px;background:#8a8886;"></div>
<div class="a" style="left:368px;top:537px;width:18px;height:4px;background:#8a8886;"></div>
<div class="a" style="left:368px;top:866px;width:18px;height:4px;background:#8a8886;"></div>
<div class="a" style="left:141px;top:697px;width:4px;height:16px;background:#8a8886;"></div>
<div class="a" style="left:609px;top:697px;width:4px;height:16px;background:#8a8886;"></div>
<div class="t" style="left:148px;top:536.5px;font-size:15.6px;line-height:24px;color:#3b3a39;letter-spacing:-0.1px;-webkit-text-stroke:0.35px #3b3a39">Total Empleados por Estado</div>
<svg class="a" style="left:148px;top:561px" width="458" height="305" viewBox="10 18 1515 1005" preserveAspectRatio="none"><rect x="10" y="18" width="1515" height="1005" fill="#a8c7ef"/><path d="M66 18 L833 18 L894 40 L945 76 L996 127 L1026 152 L1057 203 L1067 127 L1098 76 L1108 51 L1123 18 L1367 18 L1402 76 L1453 127 L1479 178 L1519 254 L1519 280 L1451 313 L1402 346 L1352 366 L1299 396 L1276 412 L1230 458 L1152 478 L1131 532 L1125 586 L1087 629 L1044 667 L1022 694 L1034 748 L1044 802 L1034 807 L996 737 L969 710 L904 705 L850 721 L796 710 L742 732 L736 798 L742 899 L796 937 L850 910 L877 888 L925 877 L920 910 L937 1023 L841 1023 L775 989 L706 966 L625 914 L571 846 L535 770 L475 705 L432 664 L426 668 L452 705 L497 765 L520 813 L526 846 L518 846 L486 786 L448 748 L421 705 L394 656 L351 613 L302 559 L264 478 L270 360 L272 300 L260 270 L204 204 L102 102 Z" fill="#efefed" /><path d="M974 856 L1012 845 L1066 856 L1120 888 L1200 910 L1255 926 L1228 937 L1174 926 L1120 905 L1066 877 L1012 861 Z" fill="#efefed" /><path d="M1150 905 L1200 910 L1265 935 L1250 948 L1190 940 L1150 920 Z" fill="#efefed" /><path d="M1290 940 L1320 938 L1322 948 L1292 950 Z" fill="#efefed" /><defs><filter id="mblur" x="-20%" y="-20%" width="140%" height="140%"><feGaussianBlur stdDeviation="12"/></filter><clipPath id="mclip"><path d="M66 18 L833 18 L894 40 L945 76 L996 127 L1026 152 L1057 203 L1067 127 L1098 76 L1108 51 L1123 18 L1367 18 L1402 76 L1453 127 L1479 178 L1519 254 L1519 280 L1451 313 L1402 346 L1352 366 L1299 396 L1276 412 L1230 458 L1152 478 L1131 532 L1125 586 L1087 629 L1044 667 L1022 694 L1034 748 L1044 802 L1034 807 L996 737 L969 710 L904 705 L850 721 L796 710 L742 732 L736 798 L742 899 L796 937 L850 910 L877 888 L925 877 L920 910 L937 1023 L841 1023 L775 989 L706 966 L625 914 L571 846 L535 770 L475 705 L432 664 L426 668 L452 705 L497 765 L520 813 L526 846 L518 846 L486 786 L448 748 L421 705 L394 656 L351 613 L302 559 L264 478 L270 360 L272 300 L260 270 L204 204 L102 102 Z"/></clipPath></defs><g clip-path="url(#mclip)"><g filter="url(#mblur)" opacity=".4"><path d="M120 30 L260 30 L420 200 L560 300 L600 470 L520 520 L420 420 L300 300 L200 200 Z" fill="#d4d3cf"/><path d="M470 720 L560 760 L660 900 L720 990 L640 960 L540 860 Z" fill="#d8d7d3"/></g></g><path d="M833 325 L894 284 L956 300 L976 325 L910 330 L854 330 Z" fill="#a8c7ef" /><path d="M913 355 L933 349 L943 406 L933 457 L918 447 L907 406 Z" fill="#a8c7ef" /><path d="M976 325 L1006 366 L1045 356 L1016 406 L991 396 Z" fill="#a8c7ef" /><path d="M996 447 L1047 422 L1108 401 L1072 432 L1026 447 Z" fill="#a8c7ef" /><path d="M1057 406 L1118 386 L1098 406 L1067 412 Z" fill="#a8c7ef" /><path d="M1199 315 L1250 274 L1301 254 L1352 224 L1402 200 L1450 190 L1423 240 L1420 300 L1400 330 L1330 340 L1280 330 L1230 330 Z" fill="#a8c7ef" /><path d="M681 140 L700 127 L740 170 L762 230 L745 234 L715 200 Z" fill="#a8c7ef" /><path d="M640 25 L660 20 L690 70 L670 90 L650 60 Z" fill="#a8c7ef" /><ellipse cx="1230" cy="95" rx="22" ry="9" transform="rotate(-30 1230 95)" fill="#a8c7ef"/><ellipse cx="1125" cy="125" rx="18" ry="7" transform="rotate(20 1125 125)" fill="#a8c7ef"/><ellipse cx="1330" cy="70" rx="15" ry="6" transform="rotate(-40 1330 70)" fill="#a8c7ef"/><ellipse cx="1010" cy="260" rx="12" ry="5" transform="rotate(10 1010 260)" fill="#a8c7ef"/><ellipse cx="1270" cy="160" rx="10" ry="5" transform="rotate(30 1270 160)" fill="#a8c7ef"/><ellipse cx="560" cy="140" rx="9" ry="4" transform="rotate(-20 560 140)" fill="#a8c7ef"/><ellipse cx="760" cy="95" rx="10" ry="4" transform="rotate(40 760 95)" fill="#a8c7ef"/><path d="M284 265 L742 264 L788 264 L833 284 L894 289 L966 325 L1006 376 L996 447 L1067 406 L1148 371 L1210 356 L1245 310 L1266 315 L1282 376 L1277 412" fill="none" stroke="#8f8f8f" stroke-width="5"/><path d="M394 656 L480 660 L560 670 L640 700 L700 740 L742 790" fill="none" stroke="#8f8f8f" stroke-width="5"/><path d="M345 18 L345 265 M518 18 L518 265 M666 18 L666 265 M790 150 L790 265 M880 40 L790 150 M1190 18 L1190 230 L1130 260 L1199 315 M1150 230 L1350 230" fill="none" stroke="#b8b8b8" stroke-width="2" stroke-dasharray="6 5"/><path d="M330 330 L600 330 M395 270 L395 450 M500 280 L505 460 M630 270 L630 600 M760 270 L760 600 M270 450 L900 450 M540 520 L900 520 M350 600 L760 600 M860 350 L860 700 M900 520 L1100 520 M940 450 L940 700 M990 600 L1100 600 M1020 450 L1020 700" fill="none" stroke="#c8c8c8" stroke-width="2" stroke-dasharray="6 5"/><circle cx="347" cy="553" r="30" fill="#5ea5f2" stroke="#3076d0" stroke-width="3.5"/><circle cx="707" cy="677" r="37" fill="#5ea5f2" stroke="#3076d0" stroke-width="3.5"/><circle cx="1198" cy="440" r="31" fill="#5ea5f2" stroke="#3076d0" stroke-width="3.5"/><circle cx="332" cy="397" r="8" fill="#a9cdf7" stroke="#3383e0" stroke-width="5"/><circle cx="435" cy="385" r="8" fill="#a9cdf7" stroke="#3383e0" stroke-width="5"/><circle cx="525" cy="320" r="8" fill="#a9cdf7" stroke="#3383e0" stroke-width="5"/><circle cx="687" cy="308" r="8" fill="#a9cdf7" stroke="#3383e0" stroke-width="5"/><circle cx="401" cy="505" r="8" fill="#a9cdf7" stroke="#3383e0" stroke-width="5"/><circle cx="597" cy="514" r="8" fill="#a9cdf7" stroke="#3383e0" stroke-width="5"/><circle cx="937" cy="492" r="8" fill="#a9cdf7" stroke="#3383e0" stroke-width="5"/><circle cx="1000" cy="482" r="8" fill="#a9cdf7" stroke="#3383e0" stroke-width="5"/><circle cx="1087" cy="470" r="8" fill="#a9cdf7" stroke="#3383e0" stroke-width="5"/><circle cx="1126" cy="422" r="8" fill="#a9cdf7" stroke="#3383e0" stroke-width="5"/><circle cx="1072" cy="548" r="8" fill="#a9cdf7" stroke="#3383e0" stroke-width="5"/><circle cx="936" cy="585" r="8" fill="#a9cdf7" stroke="#3383e0" stroke-width="5"/><circle cx="1004" cy="736" r="8" fill="#a9cdf7" stroke="#3383e0" stroke-width="5"/><text x="690" y="503" font-size="38" font-weight="700" text-anchor="middle" fill="#3b3a39" font-family="Liberation Sans" letter-spacing="1">ESTADOS UNIDOS</text><text x="855" y="790" font-size="30" text-anchor="middle" fill="#4a7ed6" font-family="Liberation Sans">Golfo de</text><text x="865" y="827" font-size="30" text-anchor="middle" fill="#4a7ed6" font-family="Liberation Sans">México</text><text x="655" y="866" font-size="26" font-weight="700" text-anchor="middle" fill="#3b3a39" font-family="Liberation Sans">MÉXICO</text><text x="1082" y="880" font-size="26" font-weight="700" text-anchor="middle" fill="#3b3a39" font-family="Liberation Sans">CUBA</text><text x="1160" y="922" font-size="24" font-weight="700" text-anchor="middle" fill="#3b3a39" font-family="Liberation Sans">HAITI</text><text x="1282" y="925" font-size="24" font-weight="700" text-anchor="middle" fill="#3b3a39" font-family="Liberation Sans">PR</text><text x="1280" y="955" font-size="24" font-weight="700" text-anchor="middle" fill="#3b3a39" font-family="Liberation Sans">(EE UU)</text><text x="1367" y="751" font-size="24" text-anchor="middle" fill="#4a7ed6" font-family="Liberation Sans">Mar de los Sargazos</text><rect x="22" y="965" width="14" height="14" fill="#f25022"/><rect x="38" y="965" width="14" height="14" fill="#7fba00"/><rect x="22" y="981" width="14" height="14" fill="#00a4ef"/><rect x="38" y="981" width="14" height="14" fill="#ffb900"/><text x="60" y="990" font-size="24" fill="#8a8886" font-family="Liberation Sans">Microsoft Bing</text><text x="765" y="995" font-size="24" fill="#605e5c" font-family="Liberation Sans">© 2024 TomTom, © 2024 Microsoft Corporation</text><text x="1372" y="995" font-size="24" fill="#605e5c" font-family="Liberation Sans" text-decoration="underline">Terms</text></svg>
<svg class="a" style="left:77px;top:908px;" width="1202" height="3" viewBox="0 0 1202 3"><path d="M0 1.5H1202" stroke="#454443" stroke-width="2.4" stroke-dasharray="2.2 3.0"/></svg>
<div class="a" style="left:120px;top:499px;width:512px;height:398px;background:none;border:10px solid #ff0000"></div>
<div class="a" style="left:22px;top:229px;width:2004px;height:7px;background:linear-gradient(rgba(0,0,0,0.07),rgba(0,0,0,0));"></div>
</div></div>
</body></html>
